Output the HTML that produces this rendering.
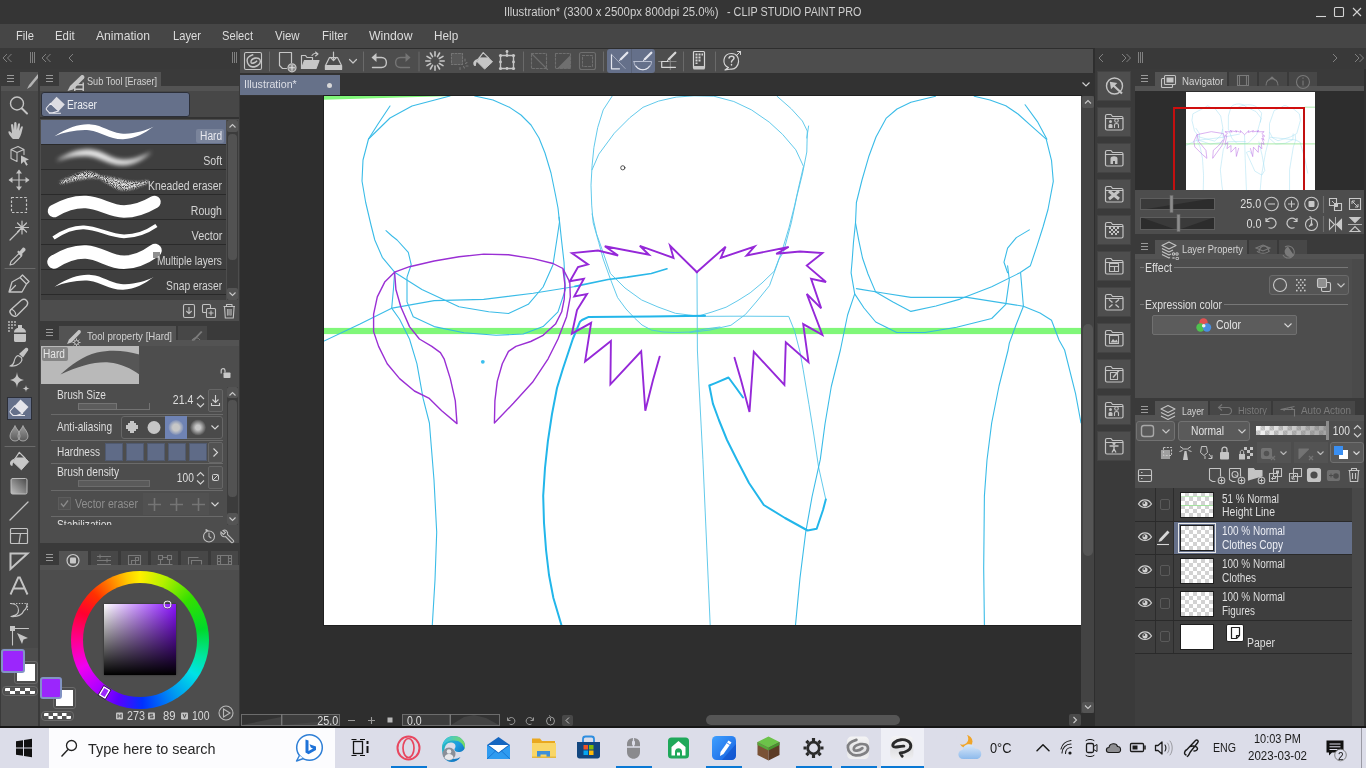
<!DOCTYPE html>
<html><head><meta charset="utf-8"><title>CSP</title>
<style>
*{box-sizing:border-box;margin:0;padding:0}
html,body{width:1366px;height:768px;overflow:hidden;background:#2e2e2e;font-family:"Liberation Sans",sans-serif;color:#d6d6d6}
.a{position:absolute}
.t{position:absolute;white-space:nowrap;line-height:1}
svg{position:absolute;overflow:visible}
.btn{position:absolute;background:#4e4e4e;border:1px solid #404040}
</style></head><body>
<!-- TITLE BAR -->
<div class="a" style="left:0;top:0;width:1366px;height:24px;background:#353535"></div>
<div class="t" style="left:503.50px;transform-origin:0 50%;top:6.34px;font-size:12.0px;color:#cfcfcf;transform:scaleX(0.9485)">Illustration* (3300 x 2500px 800dpi 25.0%)</div><div class="t" style="left:727.00px;transform-origin:0 50%;top:6.34px;font-size:12.0px;color:#cfcfcf;transform:scaleX(0.9005)">- CLIP STUDIO PAINT PRO</div>
<svg style="left:1300px;top:0" width="66" height="24" stroke="#d4d4d4" stroke-width="1.100" fill="none"><path d="M16 16.500h10"/><rect x="34.500" y="7.500" width="9" height="9" rx="1"/><path d="M53 8l8 8M61 8l-8 8"/></svg>
<!-- MENU BAR -->
<div class="a" style="left:0;top:24px;width:1366px;height:24px;background:#464646"></div>
<div class="t" style="left:15.50px;transform-origin:0 50%;top:28.59px;font-size:13.0px;color:#dcdcdc;transform:scaleX(0.8592)">File</div><div class="t" style="left:55.00px;transform-origin:0 50%;top:28.59px;font-size:13.0px;color:#dcdcdc;transform:scaleX(0.8749)">Edit</div><div class="t" style="left:96.30px;transform-origin:0 50%;top:28.59px;font-size:13.0px;color:#dcdcdc;transform:scaleX(0.9341)">Animation</div><div class="t" style="left:173.20px;transform-origin:0 50%;top:28.59px;font-size:13.0px;color:#dcdcdc;transform:scaleX(0.8610)">Layer</div><div class="t" style="left:222.00px;transform-origin:0 50%;top:28.59px;font-size:13.0px;color:#dcdcdc;transform:scaleX(0.8579)">Select</div><div class="t" style="left:275.00px;transform-origin:0 50%;top:28.59px;font-size:13.0px;color:#dcdcdc;transform:scaleX(0.8803)">View</div><div class="t" style="left:322.20px;transform-origin:0 50%;top:28.59px;font-size:13.0px;color:#dcdcdc;transform:scaleX(0.8861)">Filter</div><div class="t" style="left:369.00px;transform-origin:0 50%;top:28.59px;font-size:13.0px;color:#dcdcdc;transform:scaleX(0.9408)">Window</div><div class="t" style="left:434.30px;transform-origin:0 50%;top:28.59px;font-size:13.0px;color:#dcdcdc;transform:scaleX(0.9051)">Help</div>
<!-- DOCK HEADER STRIPS -->
<div class="a" style="left:0;top:48px;width:240px;height:21px;background:#393939"></div>
<div class="a" style="left:1095px;top:48px;width:271px;height:21px;background:#393939"></div>
<!-- COMMAND BAR -->
<div class="a" style="left:240px;top:49px;width:853px;height:24px;background:#4d4d4d"></div>
<!-- DOC TAB -->
<div class="a" style="left:240px;top:73px;width:855px;height:23px;background:#323232"></div>
<div class="a" style="left:240px;top:75px;width:100px;height:20px;background:#667189"></div>
<div class="t" style="left:244.30px;transform-origin:0 50%;top:79.16px;font-size:11.5px;color:#dcdee6;transform:scaleX(0.9263)">Illustration*</div>
<div class="a" style="left:327px;top:83px;width:5px;height:5px;border-radius:3px;background:#d8d8d8"></div>
<!-- CANVAS -->
<div class="a" id="canvas" style="left:324px;top:96px;width:757px;height:529px;background:#fff;overflow:hidden;box-shadow:0 0 0 1px #202020"><svg viewBox="324 96 757 529" width="757" height="529" style="left:0;top:0" fill="none" stroke-linecap="round" stroke-linejoin="round">
<!-- green height lines -->
<path d="M324 96h130L400 97.600L324 99.800z" fill="#80f779" stroke="none"/>
<rect x="324" y="327.900" width="757" height="6.200" fill="#80f779" stroke="none"/>
<!-- thin cyan: left figure -->
<g stroke="#30b8e6" stroke-width="1.100" opacity=".95">
<path d="M450 96L412 106L390 118L368.500 139L363 160L362 181L365.700 202.500L371 225L374.800 240L382.300 257.300L394.600 272.200L421.900 289.500L459 306.800L488.700 311.800L508.500 313.500L528.300 304.300L543.100 287L553 264.700L556.800 240L559.500 222L558 208L555.500 195L551 173L545 153L539 138L531 125L521 115L510 107.600L493 100L474.700 96"/>
<path d="M390 106L378 124L368.500 139"/>
<path d="M386 230.600L392 236L397.100 240L408.300 252.400L411.200 264.700L407 277.100L407 301.900L413.200 316.700L434.200 326.600L463.900 332.800L496.100 335.300L523.300 334L543.100 326.600L558 311.800L565.400 289.500L564 262L561.500 240L559.600 222L559 217"/>
<path d="M324 341L360 324.100L392.200 308.100L434.200 300.600L483.700 299.400L533.200 293.200L580 285.800"/>
<path d="M394.600 272.200L393.400 289.500L391.700 308.100L399.600 319.200L409.500 339L416.900 363.700L423.100 398.400L429.400 423L434 480L436.700 532.300L435 580L432.300 625"/>
</g>
<!-- thin cyan: middle figure head -->
<g stroke="#4cc2e8" stroke-width=".95" opacity=".92">
<path d="M612.100 96.200L603.200 109.900L597.700 127.600L593.900 147.500L592.100 165.300L591 185.200L591.700 205.100L593.200 222.800L598.800 242.700L603.200 259L610 278L617.600 297.600L626 309L634.500 318L642 325L651.300 330L663 332L675.400 332.500L690 332L705 329L720 327"/>
<path d="M592.100 169.700L598.800 154.200L614.300 133.200L629.800 117.700L643 107.300L658.500 101.100L676.200 97.100L694 95.800L713.900 96.200L733.800 101.500L751.500 109.900L769.200 122.100L782.500 134.300L795.800 149.800L803.500 166.400L799.100 185.200L794.700 205.100L789.100 227.200L782.500 249.400L774.300 271.100L762 283L750.200 292.800L738 300.500L726.100 307.200L712 312L699.600 315.700"/>
<path d="M592.100 214L596.600 233.900L604 255L610.400 273.500L625 288L641.700 300L658 307L675.400 313.300L694.700 315.700"/>
<path d="M777 96.200L791.300 108.800L802.400 121L807.300 131L806.800 152L802.400 174.100L796.900 196.200L791.300 222.800L783.600 251.600L779.100 259.100L769.500 285.600L757 301L745.400 314.500L730.900 325.300L710 330L690 332.500"/>
<path d="M808.600 126L806.800 138"/>
<path d="M697 272L697.200 316L697.400 350L699 385L701 423L702.900 459.400L706 530L710.200 625"/>
<path d="M690 316.400L740 316.200L788.700 316.400L794.700 331.300L800 352L803.200 369.800L809 404.700L814 436L818.500 466.700L825.800 499.500"/>
</g>
<!-- thin cyan: right figure -->
<g stroke="#30b8e6" stroke-width="1.100" opacity=".95">
<path d="M935.5 96.3L910.9 102.3L897 109L886.3 118.1L876 137L868.7 156.8L862 180L856.4 202.5L855.500 222.900L858.800 240.600L862.500 258L868 274L875.7 292.1L893 302L910.9 311.4L936 306L960.1 299.1L991.7 286.8L1019.9 272.8L1030.4 265.7L1037.4 244.7L1043 227L1048 209.5L1053.3 181.4L1051.5 160.3L1046.2 139.2L1030.4 125.1L1018 114L1005.8 105.8L990 100L974.2 96.3"/>
<path d="M1025.1 104.8L1037.4 121.6L1046.9 139.2"/>
<path d="M855.500 222.900L853.500 242L852.200 260L851.100 272.800L854.7 293.9L864 308L875.7 322L896.8 332.5L925 332.5L956.6 327.3L991.7 318.5L1005.8 304.4L1009.3 279.8L1007.6 265.7"/>
<path d="M1029.3 229.9L1016.3 237.6L1007.6 248.2L1004 262.2L1007.6 272.8"/>
<path d="M1020.6 272.8L1023.4 306.2L1016 325L1009.3 343.1L1008.1 350L999 386L991.7 422.9L987 460L984.4 495.9L983.7 568.8L984.4 625"/>
<path d="M856.4 288.6L883 293L910.9 297.4L967.1 297.4L1023.4 306.2L1040 313L1051.5 320.2L1059 340L1064.6 350L1075.6 393.8L1081 423"/>
<path d="M854.7 293.9L847.6 315L840.4 350L831.3 386.5L825 424L820.3 459.4L812 497L805.7 532.3L800 578L795.5 625"/>
</g>
<!-- medium cyan shoulder stroke -->
<path d="M575 286.400L608 279.500L627.200 277.100L651.300 273.500L667 268.700" stroke="#2bb8e8" stroke-width="1.600"/>
<!-- thick cyan: middle figure body + hand -->
<g stroke="#22b6ea" stroke-width="2">
<path d="M705 315.7L650 316.4L588.700 316.900L582 320L580 321.700L572.800 339L562.900 368.700L557 388L552 414L547.9 441.2L545 468L543.2 495.9L544 523L546.1 550.5L549 575L553.4 598L561.4 625"/>
<path d="M743 397.5L735.5 387L728.5 377.5L715.3 383.1L709.3 385.5L712.9 403.6L718.9 420L727 440L736.5 459L749 483L763.8 505L785 518L807.6 530.5L816.7 528.7L823 510L825.8 499.5"/>
</g>
<circle cx="482.800" cy="361.800" r="1.900" fill="#3bbfee" stroke="none"/>
<!-- purple: left scarf -->
<g stroke="#9a2fd4" stroke-width="1.4">
<path d="M394.600 272.200L409.500 266.700L434.200 261L459 256.800L483.700 254.100L508.500 254.800L533.200 258.600L553 263.500L562.900 268.500L569.800 282.100L570.300 296.900L566.600 316.700L558 339L548.100 358.800L532.500 382.300L513.400 403.300L494.400 423.100L494.900 400.900L497.300 381.100L502.300 363.700L508.500 351.400L515.900 346.400L530.700 341.500L543.100 335.300L555.500 324.100L561.700 311.800L564.200 299.400L564.900 284.500L562.900 268.500"/>
<path d="M394.600 272.200L384.700 282.100L377.300 296.900L373.600 314.200L373.600 331.600L378.600 346.400L387.200 363.700L399.600 378.600L414.400 391L429.300 398.400L441.700 410.800L457 423.600L455.300 400.900L450.300 378.600L444.100 358.800L440.400 352.600L431.800 346.400L419.400 339L409.500 326.600L400.800 306.800L395.900 289.500L394.600 272.200"/>
</g>
<!-- purple: fur collar -->
<g stroke="#9528d8" stroke-width="1.9" stroke-linejoin="miter">
<path d="M697 272.3L670.1 245.8L673.5 257.9L639.8 245.8L648.9 254.7L604.8 246.3L618.1 255.5L598 250.5L571.9 253.1L588 264.4L578 267L569.9 281.2L583.9 278.8L574.3 296.4L587 294L577 310L571.9 333.7L591.1 322.9L585.1 361.4L610.9 340.9L610.4 384.3L641.2 351.3L645.3 410.8L653 380L659.7 356.6"/>
<path d="M696.7 272.3L725.6 246.6L720.8 257.9L754.5 246.6L746.6 255.5L788.7 247L776.2 253.8L800 251.5L822.4 253.1L806.8 265.6L826 282L811.1 278.8L821.2 308.4L806.8 294L822.4 334.9L803.2 324.1L808.5 362.1L785.8 342.2L784.4 384.8L753.8 351.8L749.5 412L741 380L734.5 357.8"/>
</g>
<!-- cursor -->
<circle cx="622.800" cy="167.800" r="2.100" stroke="#2a2a2a" stroke-width=".8" fill="#fff"/>
</svg></div>

<!-- LEFT DOCK HEADER ICONS -->
<svg style="left:0;top:46px" width="240" height="21" stroke="#808080" stroke-width="1" fill="none"><path d="M7 8l-4 4 4 4M11.500 8l-4 4 4 4M30.500 6v11M32.500 6v11M34.500 6v11M46 8l-4 4 4 4M50.500 8l-4 4 4 4M73 8l-4 4 4 4M232.500 6v11M234.500 6v11M236.500 6v11"/></svg>
<!-- LEFT DOCK BG -->
<div class="a" style="left:0;top:69px;width:240px;height:659px;background:#3a3a3a"></div>
<!-- TOOL COLUMN -->
<div class="a" style="left:1px;top:70px;width:37px;height:657px;background:#484848"></div>
<div class="a" style="left:1px;top:70px;width:37px;height:16px;background:#3a3a3a"></div>
<div class="a" style="left:20px;top:72px;width:18px;height:19px;background:#535353"></div>
<div class="a" style="left:1px;top:86px;width:37px;height:5px;background:#535353"></div>
<svg style="left:0;top:70px" width="40" height="22" stroke="#9a9a9a" stroke-width="1" fill="none"><path d="M7 5.500h7M7 8.500h7M7 11.500h7"/><path d="M38 4l-9 11-2 4 4-2.500 7-8.500z" fill="#b4b4b4" stroke="none"/></svg>
<!-- tool icons -->
<svg id="tools" style="left:0;top:91px" width="39" height="560" stroke="#c4c4c4" stroke-width="1.4" fill="none" stroke-linecap="round" stroke-linejoin="round">
<!-- magnifier (19,104 => y 13) -->
<g transform="translate(0 1)"><circle cx="17" cy="11.500" r="6.500"/><path d="M22 16.500l5 5" stroke-width="2"/></g>
<!-- hand y=39 -->
<g transform="translate(0 2)"><path d="M13 46c-3-3-5-6-4.500-7.500 1-1 2.500.5 3.500 2l-1-8.500c.3-1.500 1.800-1.500 2.200 0l.8 5 .2-7c.3-1.500 2-1.500 2.300 0l.3 7 1.200-6c.5-1.300 2-1 2 .4l-.8 6.600 1.800-4c.7-1.200 2-.6 1.800.6-1 4-1.500 8-4 11.400z" fill="#c4c4c4" stroke="none"/></g>
<!-- 3d cube y=63 -->
<g transform="translate(0 1.500)"><g stroke-width="1.100"><path d="M11 57l7-3 6 3v5M11 57v9l6 3M11 57l6 3 7-3M17 60v9"/></g><path d="M21 63l8 4-3.500 1.200 2.300 4-1.600 1-2.300-4.200-2.900 2.500z" fill="#c4c4c4" stroke="none"/></g>
<!-- move y=89 -->
<g stroke-width="1.200"><path d="M19 80v18M10 89h18"/></g><path d="M19 78.500l3 4h-6zM19 99.500l3-4h-6zM8.500 89l4-3v6zM29.500 89l-4-3v6z" fill="#c4c4c4" stroke="none"/>
<!-- marquee y=114 -->
<rect x="11.500" y="106.500" width="15" height="15" stroke-dasharray="2.500 1.700" stroke-width="1.200" stroke-linecap="butt"/>
<!-- wand y=138 -->
<g stroke-width="1.200"><path d="M10 149l9-9"/><path d="M22 130v13M15.500 136.500h13M17.500 132l9 9M26.500 132l-9 9"/></g>
<!-- eyedropper y=165 -->
<path d="M10 174l1-3.500 8-8 2.500 2.500-8 8z" stroke-width="1.100"/><path d="M19.500 160.500l3-3.500c1.500-1.300 4 1 2.700 2.700l-3.200 3.200 .8 1-1.400 1.400-4.300-4.300 1.400-1.400z" fill="#c4c4c4" stroke="none"/>
<path d="M5 177.500h30" stroke="#6a6a6a" stroke-width="1"/>
<!-- pen y=192 -->
<path d="M9 201l3-10 8-4.500 6.500 6.500-4.500 8zM9 201l6.500-6.500M20 186.500l2.500-2.500 6.500 6.500-2.500 2.500" stroke-width="1.300"/>
<!-- pencil y=217 -->
<path d="M11 223c-1.500-1.500-1.500-3 0-4.500l10-9c2-1.500 4-1.500 5.500 0s1.500 3.500 0 5.500l-9.500 9.500c-1.500 1.500-4.500.5-6-1.500z" stroke-width="1.400"/><path d="M11 218.500c1.500-.5 5 2.500 4.500 5" stroke-width="1.100"/>
<!-- airbrush y=241 -->
<path d="M14 243h12v6.500c0 1-1 1.500-2 1.500h-8c-1 0-2-.5-2-1.500zM14 241.500c0-3 2.500-4.500 4-4.500v-3h4v3c1.500 0 4 1.500 4 4.500z" fill="#c4c4c4" stroke="none"/><g fill="#c4c4c4" stroke="none"><circle cx="9" cy="231" r=".9"/><circle cx="12" cy="231" r=".9"/><circle cx="15" cy="231" r=".9"/><circle cx="9" cy="234" r=".9"/><circle cx="12" cy="234" r=".9"/><circle cx="15" cy="234" r=".9"/><circle cx="9" cy="237" r=".9"/><circle cx="12" cy="237" r=".9"/><circle cx="9" cy="240" r=".9"/></g>
<!-- brush y=267 -->
<path d="M19 263l6.500-6c1.500-1 3.500.5 2.500 2.500l-5 7z" fill="#c4c4c4" stroke="none"/><path d="M18 264.500c-3 1-3.500 4-4 6.500-.5 2-2 3.500-4 4 4 .5 9-1 11-4 1-1.500 1-3.500.5-4.500z" stroke-width="1.200"/>
<!-- sparkle y=292 -->
<path d="M17 281c.6 5 2 7 7 8-5 1-6.400 3-7 8-.6-5-2-7-7-8 5-1 6.400-3 7-8zM26 294c.3 2.300 1 3.200 3.500 3.600-2.500.4-3.200 1.300-3.500 3.600-.3-2.300-1-3.200-3.500-3.600 2.500-.4 3.200-1.300 3.500-3.600z" fill="#c4c4c4" stroke="none"/>
</svg>
<!-- selected eraser tool -->
<div class="a" style="left:7px;top:397px;width:25px;height:23px;background:#65708a;border:1px solid #2c2f38"></div>
<svg style="left:6px;top:395px" width="27" height="26" fill="none" stroke="#e8e8ee" stroke-width="1.100" stroke-linejoin="round"><path d="M14.500 4.500l8 7.500-6 6.500-8-7.500z" fill="#e4e4ea" stroke="none"/><path d="M8.500 11l-4 4.500c-.7.800-.7 1.600 0 2.300l2.600 2.700h3.400l6-2zM7 20.500h12"/></svg>
<svg id="tools2" style="left:0;top:420px" width="39" height="240" stroke="#c4c4c4" stroke-width="1.400" fill="none" stroke-linecap="round" stroke-linejoin="round">
<!-- blend y=434 => 14 -->
<defs><linearGradient id="gbl" x1="0" y1="0" x2="0" y2="1"><stop offset="0" stop-color="#9a9a9a"/><stop offset="1" stop-color="#5a5a5a"/></linearGradient><linearGradient id="ggr" x1="0" y1="1" x2="1" y2="0"><stop offset="0" stop-color="#c0c0c0"/><stop offset="1" stop-color="#484848"/></linearGradient></defs>
<path d="M15 6c2 3.500 5 6.500 5 10 0 3-2.200 5-5 5s-5-2-5-5c0-3.500 3-6.500 5-10zM23 6c2 3.500 5 6.500 5 10 0 3-2.200 5-5 5s-5-2-5-5c0-3.500 3-6.500 5-10z" fill="url(#gbl)" stroke="#b8b8b8" stroke-width=".8"/>
<path d="M5 26.500h30" stroke="#6a6a6a" stroke-width="1"/>
<!-- fill y=461 => 41 -->
<path d="M15.500 38h9.400l3.700 3.700-7.200 8.100-8.400-8.100z" fill="#c8c8c8" stroke="#c8c8c8" stroke-width="1"/><path d="M15.500 38l3.800-5.700 5.600 5.700" stroke="#c8c8c8" stroke-width="1.200"/><path d="M14.500 38.800c-3 .7-4.800 2.700-4.500 5 .2 1.500 1.200 2.300 2.500 2 .3-1.800.3-3.500 1.500-5z" fill="#c8c8c8" stroke="none"/>
<!-- gradient y=486 => 66 -->
<rect x="11" y="58.500" width="16" height="15.500" rx="1.500" fill="url(#ggr)" stroke="#bdbdbd" stroke-width="1"/>
<!-- line y=511 => 91 -->
<path d="M10 100l18-18" stroke-width="1.300"/>
<!-- frame y=536 => 116 -->
<g stroke-width="1.200"><rect x="10.500" y="108.500" width="17" height="15" rx="1"/><path d="M10.500 113.500h17M20.500 113.500l-1.500 10"/></g>
<!-- ruler y=561 => 141 -->
<path d="M10.500 133.500h17l-17 15.500z" stroke-width="2" stroke-linejoin="miter"/>
<!-- text A y=586 => 166 -->
<path d="M10.500 174.500l7.700-17h1.600l7.700 17M13.500 168.500h11" stroke-width="1.900" stroke-linejoin="miter" stroke-linecap="butt"/>
<!-- balloon y=610 => 190 -->
<path d="M10.500 183.500c5 0 8 3 8 7 0 3-2 5-7.500 6 7 .5 11-1.500 13-6 1.500-1 3-2.500 3-7" stroke-width="1.200"/><path d="M10.500 183.500h17v7" stroke-width="1" stroke-dasharray="1.300 1.500" stroke-linecap="butt"/>
<!-- correct line y=635 => 215 -->
<rect x="10" y="206" width="5" height="5" fill="#c4c4c4" stroke="none"/><path d="M12.500 209v16M12.500 208.500h16" stroke-width="1.100"/><path d="M17 213l11 5-4.500 1.500-1.500 4.500z" fill="#c4c4c4" stroke="none"/>
</svg>
<!-- main color chips -->
<div class="a" style="left:1px;top:648px;width:37px;height:79px;background:#4d4d4d"></div>
<div class="a" style="left:14px;top:661px;width:24px;height:23px;border:1px solid #6a6a6a;border-radius:3px;background:#4d4d4d"></div>
<div class="a" style="left:17px;top:664px;width:18px;height:17px;background:#fff"></div>
<div class="a" style="left:1px;top:649px;width:24px;height:24px;background:#9b26fc;border:2px solid #8293c4;border-radius:3px"></div>
<div class="a" style="left:2px;top:686px;width:36px;height:10px;border:1px solid #6a6a6a;border-radius:4px"></div>
<svg style="left:5px;top:688px" width="30" height="6"><rect width="30" height="6" fill="#fff" rx="1"/><path d="M0 3h5v3h-5zM5 0h5v3h-5zM10 3h5v3h-5zM15 0h5v3h-5zM20 3h5v3h-5zM25 0h5v3h-5z" fill="#555"/></svg>

<!-- SUB TOOL PANEL -->
<div class="a" style="left:40px;top:70px;width:199px;height:251px;background:#4d4d4d"></div>
<div class="a" style="left:40px;top:70px;width:199px;height:16px;background:#3a3a3a"></div>
<div class="a" style="left:59px;top:72px;width:102px;height:19px;background:#535353"></div>
<div class="a" style="left:40px;top:86px;width:199px;height:5px;background:#535353"></div>
<svg style="left:40px;top:70px" width="200" height="22" stroke="#9a9a9a" stroke-width="1" fill="none"><path d="M6 5.500h7M6 8.500h7M6 11.500h7"/><g fill="#c4c4c4" stroke="none"><path d="M41 5.500l-11 10.500-2.500 5 5.500-1.500 11-11c1.500-2-1-4.500-3-3z"/><path d="M34 14h10v1.500h-10zM34 18.500h10v1.500h-10zM42.500 12.500h1.500v9h-1.500zM34 12.500h1.500v9h-1.500z"/></g></svg>
<div class="t" style="left:87.00px;transform-origin:0 50%;top:76.26px;font-size:11.5px;color:#d2d2d2;transform:scaleX(0.7954)">Sub Tool [Eraser]</div>
<!-- group button -->
<div class="a" style="left:40px;top:91px;width:199px;height:27px;background:#474747"></div>
<div class="a" style="left:41px;top:92px;width:149px;height:25px;background:#65708a;border:1px solid #2c2f38;border-radius:3px"></div>
<svg style="left:44.500px;top:94px" width="22" height="22" viewBox="0 0 20 20" fill="none" stroke="#e8e8ee" stroke-width="1" stroke-linejoin="round"><path d="M10.500 2.500l7.500 7-5.500 6-7.500-7z" fill="#dcdce2" stroke="none"/><path d="M5 8.500l-3.500 4c-.6.700-.6 1.400 0 2l2.300 2.500h3l5.700-1.500zM3.500 17.500h11"/></svg>
<div class="t" style="left:67.00px;transform-origin:0 50%;top:98.91px;font-size:12.5px;color:#eceef2;transform:scaleX(0.8149)">Eraser</div>
<div class="a" style="left:40px;top:117px;width:199px;height:2px;background:#333"></div>
<!-- list -->
<div class="a" style="left:41px;top:120px;width:185px;height:180px;background:#3f3f3f"></div>
<div class="a" style="left:41px;top:120px;width:185px;height:25px;background:#65708a"></div>
<div class="a" style="left:41px;top:144px;width:185px;height:1px;background:#2a2a2a"></div>
<div class="a" style="left:41px;top:169px;width:185px;height:1px;background:#2a2a2a"></div>
<div class="a" style="left:41px;top:194px;width:185px;height:1px;background:#2a2a2a"></div>
<div class="a" style="left:41px;top:219px;width:185px;height:1px;background:#2a2a2a"></div>
<div class="a" style="left:41px;top:244px;width:185px;height:1px;background:#2a2a2a"></div>
<div class="a" style="left:41px;top:269px;width:185px;height:1px;background:#2a2a2a"></div>
<div class="a" style="left:41px;top:294px;width:185px;height:1px;background:#2a2a2a"></div>
<div class="a" style="left:196px;top:129px;width:28px;height:14px;background:#7a849b;border-radius:2px"></div>
<svg style="left:41px;top:120px" width="185" height="177" fill="none">
<defs><filter id="blr" x="-20%" y="-100%" width="140%" height="300%"><feGaussianBlur stdDeviation="1.900"/></filter>
<filter id="grain" x="-5%" y="-20%" width="110%" height="140%"><feTurbulence type="fractalNoise" baseFrequency="1.1" numOctaves="1" seed="7" result="n"/><feColorMatrix in="n" values="0 0 0 0 1  0 0 0 0 1  0 0 0 0 1  2.5 2.5 0 0 -1.900" result="m"/><feGaussianBlur in="SourceGraphic" stdDeviation="1.200" result="b"/><feComposite in="b" in2="m" operator="in"/></filter></defs>
<path d="M13.500 16.2C28 7.0 40 3.5 50 4.5C62 5.5 68 12.0 80 13.5C92 14.5 104 11.0 112.700 6.6C104 13.0 94 19.0 82 19.3C68 19.5 60 11.5 48 10.2C36 9.5 24 12.0 13.500 16.2Z" fill="#fff"/>
<path d="M15 41C28 32 40 28.500 50 29.500C62 30.500 68 38 80 39.500C92 40.500 102 36 111 31.500C103 39 94 45 82 45.300C68 45.500 60 37.500 48 36.200C36 35.500 25 37.500 15 41Z" fill="#f2f2f2" filter="url(#blr)" opacity=".95"/>
<path d="M20 62.500C30 58 38 53.500 47 53C58 53 68 65.500 80 68.500C90 70 98 65 106 62C98 64 90 64 80 61C68 58 58 56 47 57C38 58 30 60 20 62.500Z" fill="#e6e6e6" stroke="#e6e6e6" stroke-width="3" stroke-linejoin="round" filter="url(#grain)"/>
<path d="M13 91C24 84.500 34 81.500 45 82C60 83 68 91 83 91.500C95 91.500 105 87 113.500 82" stroke="#fff" stroke-width="12.500" stroke-linecap="round"/>
<path d="M12.500 118C24 110 33 107 43 107.300C58 108 68 116 83 116.300C95 116.300 106 112 115.400 105.500" stroke="#fff" stroke-width="3.800" stroke-linecap="butt"/>
<path d="M13 142C24 135 34 131.500 45 132C60 133 68 142 83 142.300C95 142.300 105 137 114 130.500" stroke="#fff" stroke-width="13.500" stroke-linecap="round"/>
<path d="M13.500 166.7C28 157.5 40 154.0 50 155.0C62 156.0 68 162.5 80 164.0C92 165.0 104 161.5 112.700 157.1C104 163.5 94 169.5 82 169.8C68 170.0 60 162.0 48 160.7C36 160.0 24 162.5 13.500 166.7Z" fill="#fff"/>
</svg>
<div class="a" style="left:153px;top:252px;width:7px;height:6px;background:#8e8e8e"></div>
<div class="t" style="right:1144.00px;transform-origin:100% 50%;top:130.21px;font-size:12.5px;color:#e8e8ee;transform:scaleX(0.8121)">Hard</div>
<div class="t" style="right:1144.00px;transform-origin:100% 50%;top:155.21px;font-size:12.5px;color:#d4d4d4;transform:scaleX(0.8545)">Soft</div>
<div class="t" style="right:1144.00px;transform-origin:100% 50%;top:180.21px;font-size:12.5px;color:#d4d4d4;transform:scaleX(0.8320)">Kneaded eraser</div>
<div class="t" style="right:1144.00px;transform-origin:100% 50%;top:205.21px;font-size:12.5px;color:#d4d4d4;transform:scaleX(0.8417)">Rough</div>
<div class="t" style="right:1144.00px;transform-origin:100% 50%;top:230.21px;font-size:12.5px;color:#d4d4d4;transform:scaleX(0.8748)">Vector</div>
<div class="t" style="right:1144.00px;transform-origin:100% 50%;top:255.21px;font-size:12.5px;color:#d4d4d4;transform:scaleX(0.8137)">Multiple layers</div>
<div class="t" style="right:1144.00px;transform-origin:100% 50%;top:280.21px;font-size:12.5px;color:#d4d4d4;transform:scaleX(0.8224)">Snap eraser</div>

<!-- sub tool scrollbar -->
<div class="a" style="left:227px;top:120px;width:11px;height:180px;background:#3c3c3c"></div>
<div class="a" style="left:227px;top:120px;width:11px;height:12px;background:#545454;border-radius:2px"></div>
<div class="a" style="left:227px;top:288px;width:11px;height:12px;background:#545454;border-radius:2px"></div>
<div class="a" style="left:228px;top:134px;width:9px;height:126px;background:#525252;border-radius:4px"></div>
<svg style="left:227px;top:120px" width="11" height="180" stroke="#c8c8c8" stroke-width="1.100" fill="none"><path d="M2.500 7.500l3-3 3 3M2.500 172.500l3 3 3-3"/></svg>
<!-- sub tool footer -->
<div class="a" style="left:40px;top:301px;width:199px;height:20px;background:#4d4d4d"></div>
<svg style="left:180px;top:303px" width="60" height="18" stroke="#c2c2c2" stroke-width="1.100" fill="none" stroke-linejoin="round"><rect x="3.500" y="1.500" width="11" height="13" rx="1.500"/><path d="M9 4v6.500M6.300 8l2.700 2.700 2.700-2.700"/><rect x="22.500" y="1.500" width="8" height="8" rx="1"/><rect x="26.500" y="5.500" width="9" height="9" rx="1" fill="#4d4d4d"/><path d="M31 7.500v5M28.500 10h5"/><path d="M43.500 3.500h11.500M46.500 3.500v-2h5.500v2M44.500 3.500l.8 11.500h8l.8-11.500M47.500 6v6.500M51 6v6.500"/><rect x="47.500" y="6" width="3.500" height="6.500" fill="#8a8a8a" stroke="none"/></svg>

<!-- TOOL PROPERTY PANEL -->
<div class="a" style="left:40px;top:325px;width:199px;height:218px;background:#4d4d4d"></div>
<div class="a" style="left:40px;top:321px;width:199px;height:19px;background:#3a3a3a"></div>
<div class="a" style="left:59px;top:326px;width:117px;height:20px;background:#535353"></div>
<div class="a" style="left:178px;top:326px;width:29px;height:14px;background:#474747"></div>
<div class="a" style="left:40px;top:340px;width:199px;height:6px;background:#535353"></div>
<svg style="left:40px;top:324px" width="200" height="22" stroke="#9a9a9a" stroke-width="1" fill="none"><path d="M6 5.500h7M6 8.500h7M6 11.500h7"/><g fill="#c4c4c4" stroke="none"><path d="M38 6.500l-9 9-2 4.500 4.500-1.500 9-9.500c1.300-1.800-.8-4-2.500-2.500z"/></g><g stroke="#c4c4c4" stroke-width="1"><circle cx="36.500" cy="18.500" r="2"/><path d="M36.500 14.500v1.500M36.500 21v1.500M32.500 18.500h1.500M39 18.500h1.500M33.700 15.700l1 1M38.300 20.300l1 1M39.300 15.700l-1 1M34.700 20.300l-1 1"/></g><g fill="#7c7c7c" stroke="none"><path d="M161 7l-8 8.500-1.500 1.500 3-.5 8-8.500z"/></g><path d="M152 16c2-3 6-3 8 0" stroke="#7c7c7c"/></svg>
<div class="t" style="left:87.00px;transform-origin:0 50%;top:330.76px;font-size:11.5px;color:#d2d2d2;transform:scaleX(0.8416)">Tool property [Hard]</div>
<!-- preview -->
<div class="a" style="left:41px;top:346px;width:98px;height:38px;background:#b9b9b9"></div>
<svg style="left:41px;top:346px" width="98" height="38"><path d="M19.400 28.500C30 19 42 10 56 6.500C70 3.500 85 4.500 98.300 8.600L98.300 28.500C90 22.500 80 17.500 68 16.500C54 15.500 38 20 19.400 28.500Z" fill="#565656"/></svg>
<div class="a" style="left:42px;top:347px;width:26px;height:14px;background:#858585;border-radius:2px"></div>
<div class="t" style="left:43.00px;transform-origin:0 50%;top:348.34px;font-size:12.0px;color:#e6e6e6;transform:scaleX(0.8458)">Hard</div>
<svg style="left:218px;top:366px" width="14" height="14" fill="none" stroke="#c8c8c8" stroke-width="1.200"><rect x="5.500" y="6.500" width="7" height="5.500" fill="#c8c8c8" stroke="none" rx=".8"/><path d="M3.200 7.500v-3c0-2.500 3.800-2.500 3.800 0v2"/></svg>
<!-- rows -->
<div class="t" style="left:57.00px;transform-origin:0 50%;top:388.91px;font-size:12.5px;color:#dedede;transform:scaleX(0.8107)">Brush Size</div>
<div class="a" style="left:78px;top:403px;width:72px;height:7px;border-bottom:1px solid #727272;border-right:1px solid #727272"></div>
<div class="a" style="left:78px;top:403px;width:39px;height:7px;background:#5c5c5c;border:1px solid #747474"></div>
<div class="t" style="right:1172.50px;transform-origin:100% 50%;top:394.41px;font-size:12.5px;color:#dedede;transform:scaleX(0.8427)">21.4</div>
<svg style="left:195px;top:393px" width="12" height="16" stroke="#d0d0d0" stroke-width="1.100" fill="none"><path d="M2 6l3.500-3.500 3.500 3.500M2 10.500l3.500 3.500 3.500-3.500"/></svg>
<div class="a" style="left:208px;top:389px;width:15px;height:23px;background:#525252;border:1px solid #666;border-radius:2px"></div>
<svg style="left:208px;top:389px" width="15" height="23" stroke="#cfcfcf" stroke-width="1.100" fill="none"><path d="M7.500 6v7M4.500 10.500l3 3 3-3M3.500 14v2.500h8v-2.500"/></svg>
<div class="a" style="left:51px;top:414px;width:172px;height:1px;background:#6a6a6a"></div>
<div class="t" style="left:57.00px;transform-origin:0 50%;top:420.91px;font-size:12.5px;color:#dedede;transform:scaleX(0.8078)">Anti-aliasing</div>
<div class="a" style="left:121px;top:416px;width:102px;height:23px;background:#4a4a4a;border:1px solid #676767;border-radius:3px"></div>
<div class="a" style="left:165px;top:416px;width:22px;height:23px;background:#6f83b4"></div>
<svg style="left:121px;top:416px" width="102" height="23" fill="none"><defs><radialGradient id="aa3"><stop offset=".45" stop-color="#c6c6c6"/><stop offset="1" stop-color="#c6c6c6" stop-opacity=".15"/></radialGradient><radialGradient id="aa4"><stop offset=".3" stop-color="#c6c6c6"/><stop offset="1" stop-color="#c6c6c6" stop-opacity=".05"/></radialGradient></defs>
<path d="M9 5h4v2h2v2h2v4h-2v2h-2v2h-4v-2h-2v-2h-2v-4h2v-2h2z" fill="#c6c6c6"/><circle cx="33" cy="11.500" r="6.500" fill="#c6c6c6"/><circle cx="55" cy="11.500" r="7.500" fill="url(#aa3)"/><circle cx="77" cy="11.500" r="8" fill="url(#aa4)"/><path d="M90.500 9.500l3.500 3.500 3.500-3.500" stroke="#d8d8d8" stroke-width="1.100"/></svg>
<div class="a" style="left:51px;top:440px;width:172px;height:1px;background:#6a6a6a"></div>
<div class="t" style="left:57.00px;transform-origin:0 50%;top:446.41px;font-size:12.5px;color:#dedede;transform:scaleX(0.8038)">Hardness</div>
<div class="a" style="left:105px;top:443px;width:18px;height:18px;background:#5f6b87;border:1px solid #505a70"></div>
<div class="a" style="left:126px;top:443px;width:18px;height:18px;background:#5f6b87;border:1px solid #505a70"></div>
<div class="a" style="left:147px;top:443px;width:18px;height:18px;background:#5f6b87;border:1px solid #505a70"></div>
<div class="a" style="left:168px;top:443px;width:18px;height:18px;background:#5f6b87;border:1px solid #505a70"></div>
<div class="a" style="left:189px;top:443px;width:18px;height:18px;background:#5f6b87;border:1px solid #505a70"></div>
<div class="a" style="left:208px;top:442px;width:15px;height:21px;background:#525252;border:1px solid #666;border-radius:2px"></div>
<svg style="left:208px;top:442px" width="15" height="21" stroke="#d8d8d8" stroke-width="1.100" fill="none"><path d="M5.500 6.500l4 4-4 4"/></svg>
<div class="a" style="left:51px;top:463px;width:172px;height:1px;background:#6a6a6a"></div>
<div class="t" style="left:57.00px;transform-origin:0 50%;top:465.91px;font-size:12.5px;color:#dedede;transform:scaleX(0.8187)">Brush density</div>
<div class="a" style="left:78px;top:480px;width:72px;height:7px;background:#5a5a5a;border:1px solid #6c6c6c"></div>
<div class="t" style="right:1172.50px;transform-origin:100% 50%;top:471.91px;font-size:12.5px;color:#dedede;transform:scaleX(0.8152)">100</div>
<svg style="left:195px;top:470px" width="12" height="16" stroke="#d0d0d0" stroke-width="1.100" fill="none"><path d="M2 6l3.500-3.500 3.500 3.500M2 10.500l3.500 3.500 3.500-3.500"/></svg>
<div class="a" style="left:208px;top:466px;width:15px;height:23px;background:#525252;border:1px solid #666;border-radius:2px"></div>
<svg style="left:208px;top:466px" width="15" height="23" stroke="#cfcfcf" stroke-width="1" fill="none"><rect x="4.500" y="8.500" width="6" height="6" rx="1"/><path d="M5 14l5-5"/></svg>
<div class="a" style="left:51px;top:490px;width:172px;height:1px;background:#6a6a6a"></div>
<div class="a" style="left:58px;top:497px;width:13px;height:13px;background:#525252;border:1px solid #5c5c5c"></div>
<svg style="left:58px;top:497px" width="13" height="13" stroke="#8a8a8a" stroke-width="1.300" fill="none"><path d="M3 6.500l2.500 3 4.500-6"/></svg>
<div class="t" style="left:75.00px;transform-origin:0 50%;top:497.91px;font-size:12.5px;color:#8e8e8e;transform:scaleX(0.8475)">Vector eraser</div>
<div class="a" style="left:143px;top:493px;width:66px;height:22px;background:#515151"></div>
<svg style="left:143px;top:493px" width="80" height="22" stroke="#757575" stroke-width="1.600" fill="none"><path d="M11.500 5v13M5 11.500h13M33.500 5v13M27 11.500h13M55.500 5v13M49 11.500h13"/><path d="M68.500 9.500l3.500 3.500 3.500-3.500" stroke="#d8d8d8" stroke-width="1.100"/></svg>
<div class="a" style="left:51px;top:516px;width:172px;height:1px;background:#6a6a6a"></div>
<div class="a" style="left:41px;top:518px;width:186px;height:7px;overflow:hidden"><div class="t" style="left:16.00px;transform-origin:0 50%;top:0.91px;font-size:12.5px;color:#dedede;transform:scaleX(0.8160)">Stabilization</div></div>
<!-- scrollbar -->
<div class="a" style="left:227px;top:387px;width:11px;height:138px;background:#3c3c3c"></div>
<div class="a" style="left:227px;top:387px;width:11px;height:11px;background:#545454;border-radius:2px"></div>
<div class="a" style="left:227px;top:513px;width:11px;height:12px;background:#545454;border-radius:2px"></div>
<div class="a" style="left:228px;top:400px;width:9px;height:97px;background:#525252;border-radius:4px"></div>
<svg style="left:227px;top:388px" width="11" height="137" stroke="#c8c8c8" stroke-width="1.100" fill="none"><path d="M2.500 7.500l3-3 3 3M2.500 129.500l3 3 3-3"/></svg>
<!-- footer -->
<div class="a" style="left:40px;top:526px;width:199px;height:17px;background:#4d4d4d"></div>
<svg style="left:200px;top:528px" width="40" height="17" stroke="#bdbdbd" stroke-width="1.100" fill="none" stroke-linecap="round"><circle cx="9" cy="8.500" r="5.500"/><path d="M9 5v3.500l2 1.500M6 1.500l2 1.200M6 1.500l.3 2.300"/><path d="M23 2.500c2.500-1.500 5.500 1 4.500 4l6 6c.8 1-1 2.800-2 2l-6-6c-3 1-5.500-2-4.500-4.500l2.500 2.500 2-2z"/></svg>

<!-- COLOR PANEL -->
<div class="a" style="left:40px;top:549px;width:199px;height:178px;background:#4d4d4d"></div>
<div class="a" style="left:40px;top:549px;width:199px;height:16px;background:#3a3a3a"></div>
<div class="a" style="left:59px;top:551px;width:29px;height:19px;background:#535353"></div>
<div class="a" style="left:91px;top:551px;width:27px;height:14px;background:#474747"></div>
<div class="a" style="left:121px;top:551px;width:27px;height:14px;background:#474747"></div>
<div class="a" style="left:151px;top:551px;width:27px;height:14px;background:#474747"></div>
<div class="a" style="left:181px;top:551px;width:27px;height:14px;background:#474747"></div>
<div class="a" style="left:211px;top:551px;width:27px;height:14px;background:#474747"></div>
<div class="a" style="left:40px;top:565px;width:199px;height:5px;background:#535353"></div>
<svg style="left:40px;top:549px" width="200" height="22" stroke="#9a9a9a" stroke-width="1" fill="none"><path d="M6 5.500h7M6 8.500h7M6 11.500h7"/><circle cx="33" cy="11.500" r="6" stroke="#c8c8c8" stroke-width="1.200"/><rect x="30" y="8.500" width="6" height="6" rx="1" fill="#c8c8c8" stroke="none"/>
<g stroke="#7a7a7a" stroke-width="1.100"><path d="M57 7.500h14M57 11.500h14M57 15.500h14M60 5.500v4M67 9.500v4"/><path d="M88.500 6.500h12v9h-12zM91.500 11.500h4v4h-4zM95.500 8.500h3v3h-3z"/><path d="M118.500 6.500h4v4h-4zM127.500 6.500h4v4h-4zM120.500 10.500v5M129.500 10.500v5M117.500 15.500h15M122.500 8.500h5"/><path d="M148.500 15.500v-7h10M151.500 15.500v-4h10v4"/><path d="M177.500 6.500h14v9h-14zM180.500 6.500v9M188.500 6.500v9M177.500 9.500h3M177.500 12.500h3M188.500 9.500h3M188.500 12.500h3"/></g></svg>
<!-- wheel -->
<div class="a" style="left:70.500px;top:571px;width:138px;height:138px;border-radius:50%;background:conic-gradient(from 0deg,#ffef00 0deg,#b4f000 22deg,#35e000 50deg,#00d92a 80deg,#00e6a0 105deg,#00e2e6 122deg,#00a0f0 145deg,#0030ff 178deg,#5a00ff 200deg,#b000ff 222deg,#f000f0 245deg,#ff0090 270deg,#ff0030 295deg,#ff3000 315deg,#ff8c00 335deg,#ffc800 348deg,#ffef00 360deg)"></div>
<div class="a" style="left:82.500px;top:583px;width:114px;height:114px;border-radius:50%;background:#4d4d4d"></div>
<div class="a" style="left:104px;top:604px;width:72px;height:71px;background:linear-gradient(to bottom,rgba(0,0,0,0),#000),linear-gradient(to right,#fff,#8a12ff);box-shadow:0 0 2px rgba(0,0,0,.5)"></div>
<svg style="left:40px;top:570px" width="200" height="158" fill="none"><circle cx="127.500" cy="34.500" r="3.500" stroke="#fff" stroke-width="1.200"/><circle cx="127.500" cy="34.500" r="4.300" stroke="#333" stroke-width=".5"/><rect x="-3.200" y="-4.500" width="6.400" height="9" transform="translate(64.500 122.500) rotate(31)" stroke="#fff" stroke-width="1.500" fill="#9b26fc"/><rect x="-4.300" y="-5.600" width="8.600" height="11.200" transform="translate(64.500 122.500) rotate(31)" stroke="#222" stroke-width=".7"/>
<circle cx="186" cy="143" r="7" stroke="#b8b8b8" stroke-width="1.100"/><path d="M183.500 139l6.500 4-6.500 4z" stroke="#b8b8b8" stroke-width="1.100"/></svg>
<!-- sub chips -->
<div class="a" style="left:53px;top:687px;width:23px;height:22px;border:1px solid #6a6a6a;border-radius:3px;background:#4d4d4d"></div>
<div class="a" style="left:56px;top:690px;width:17px;height:16px;background:#fff"></div>
<div class="a" style="left:40px;top:677px;width:22px;height:22px;background:#9b26fc;border:2px solid #8293c4;border-radius:3px"></div>
<div class="a" style="left:41px;top:711px;width:33px;height:10px;border:1px solid #6a6a6a;border-radius:4px"></div>
<svg style="left:44px;top:713px" width="27" height="6"><rect width="27" height="6" fill="#fff" rx="1"/><path d="M0 3h4.500v3h-4.500zM4.500 0h4.500v3h-4.500zM9 3h4.500v3h-4.500zM13.500 0h4.500v3h-4.500zM18 3h4.500v3h-4.500zM22.500 0h4.500v3h-4.500z" fill="#555"/></svg>
<!-- HSV -->
<svg style="left:116px;top:711px" width="75" height="10" fill="none"><g fill="#c4c4c4"><rect x="0" y="1.500" width="7" height="7" rx="1"/><rect x="32" y="1.500" width="7" height="7" rx="1"/><rect x="65" y="1.500" width="7" height="7" rx="1"/></g><g stroke="#4d4d4d" stroke-width="1"><path d="M2 3v4M5 3v4M2 5h3"/><path d="M37 3.300h-3v1.700h3v1.700h-3"/><path d="M67 3l1.500 3.800 1.500-3.800"/></g></svg>
<div class="t" style="left:127.00px;transform-origin:0 50%;top:710.41px;font-size:12.5px;color:#d8d8d8;transform:scaleX(0.8632)">273</div>
<div class="t" style="left:163.00px;transform-origin:0 50%;top:710.41px;font-size:12.5px;color:#d8d8d8;transform:scaleX(0.8991)">89</div>
<div class="t" style="left:192.00px;transform-origin:0 50%;top:710.41px;font-size:12.5px;color:#d8d8d8;transform:scaleX(0.8392)">100</div>

<!-- RIGHT DOCK HEADER ICONS -->
<svg style="left:1095px;top:46px" width="271" height="21" stroke="#808080" stroke-width="1" fill="none"><path d="M8 8l-4 4 4 4M27 8l4 4-4 4M31.500 8l4 4-4 4M43.500 6v11M45.500 6v11M47.500 6v11M238 8l4 4-4 4M260 8l4 4-4 4M264.500 8l4 4-4 4"/></svg>
<!-- RIGHT DOCK BG -->
<div class="a" style="left:1095px;top:69px;width:271px;height:659px;background:#3a3a3a"></div>
<div class="a" style="left:1097px;top:71px;width:34px;height:30px;background:#4e4e4e;border:1px solid #434343"></div><svg style="left:1097px;top:71px" width="34" height="30" stroke="#c4c4c4" stroke-width="1.100" fill="none" stroke-linejoin="round"><circle cx="17.500" cy="15" r="8" stroke-width="1.400"/><path d="M16.500 14.500l8.500 8" stroke-width="2.200"/><path d="M12.800 10.800l7.500 1.200-6.300 6.300z" fill="#c4c4c4" stroke="none"/></svg>
<div class="a" style="left:1097px;top:107px;width:34px;height:30px;background:#4e4e4e;border:1px solid #434343"></div><svg style="left:1097px;top:107px" width="34" height="30" stroke="#c4c4c4" stroke-width="1.100" fill="none" stroke-linejoin="round"><path d="M8.500 21.500v-12.500c0-.8.700-1.500 1.500-1.500h4l1.500 2h9c.800 0 1.500.700 1.500 1.500v10.500c0 .800-.700 1.500-1.500 1.500h-14.500c-.800 0-1.500-.700-1.500-1.500z" stroke-width="1.200"/><path d="M8.500 11.500h17.500" stroke-width="1"/><circle cx="13.500" cy="14.500" r="1.500" fill="#c4c4c4" stroke="none"/><path d="M11.500 21v-2.500c0-2 4-2 4 0v2.500z" fill="#c4c4c4" stroke="none"/><circle cx="19.500" cy="13.500" r="1.800"/><path d="M17.500 21v-3c0-2 4-2 4 0v3"/></svg>
<div class="a" style="left:1097px;top:143px;width:34px;height:30px;background:#4e4e4e;border:1px solid #434343"></div><svg style="left:1097px;top:143px" width="34" height="30" stroke="#c4c4c4" stroke-width="1.100" fill="none" stroke-linejoin="round"><path d="M8.500 21.500v-12.500c0-.8.700-1.500 1.500-1.500h4l1.500 2h9c.800 0 1.500.700 1.500 1.500v10.500c0 .800-.700 1.500-1.500 1.500h-14.500c-.800 0-1.500-.700-1.500-1.500z" stroke-width="1.200"/><path d="M8.500 11.500h17.500" stroke-width="1"/><path d="M13.500 21v-5.500c0-3 7-3 7 0v5.500zM16 21v-3h2v3" fill="#c4c4c4" stroke="none"/><path d="M16 21v-3h2v3" fill="#4e4e4e" stroke="none"/></svg>
<div class="a" style="left:1097px;top:179px;width:34px;height:30px;background:#4e4e4e;border:1px solid #434343"></div><svg style="left:1097px;top:179px" width="34" height="30" stroke="#c4c4c4" stroke-width="1.100" fill="none" stroke-linejoin="round"><path d="M8.500 21.500v-12.500c0-.8.700-1.500 1.500-1.500h4l1.500 2h9c.800 0 1.500.700 1.500 1.500v10.500c0 .800-.700 1.500-1.500 1.500h-14.500c-.800 0-1.500-.700-1.500-1.500z" stroke-width="1.200"/><path d="M8.500 11.500h17.500" stroke-width="1"/><path d="M12 12l10 8M22 12l-10 8" stroke-width="3"/></svg>
<div class="a" style="left:1097px;top:215px;width:34px;height:30px;background:#4e4e4e;border:1px solid #434343"></div><svg style="left:1097px;top:215px" width="34" height="30" stroke="#c4c4c4" stroke-width="1.100" fill="none" stroke-linejoin="round"><path d="M8.500 21.500v-12.500c0-.8.700-1.500 1.500-1.500h4l1.500 2h9c.800 0 1.500.700 1.500 1.500v10.500c0 .800-.700 1.500-1.500 1.500h-14.500c-.800 0-1.500-.700-1.500-1.500z" stroke-width="1.200"/><path d="M8.500 11.500h17.500" stroke-width="1"/><g fill="#c4c4c4" stroke="none"><rect x="12" y="12" width="2" height="2"/><rect x="16" y="12" width="2" height="2"/><rect x="20" y="12" width="2" height="2"/><rect x="14" y="14" width="2" height="2"/><rect x="18" y="14" width="2" height="2"/><rect x="12" y="16" width="2" height="2"/><rect x="16" y="16" width="2" height="2"/><rect x="20" y="16" width="2" height="2"/><rect x="14" y="18" width="2" height="2"/><rect x="18" y="18" width="2" height="2"/></g></svg>
<div class="a" style="left:1097px;top:251px;width:34px;height:30px;background:#4e4e4e;border:1px solid #434343"></div><svg style="left:1097px;top:251px" width="34" height="30" stroke="#c4c4c4" stroke-width="1.100" fill="none" stroke-linejoin="round"><path d="M8.500 21.500v-12.500c0-.8.700-1.500 1.500-1.500h4l1.500 2h9c.800 0 1.500.700 1.500 1.500v10.500c0 .800-.700 1.500-1.500 1.500h-14.500c-.800 0-1.500-.700-1.500-1.500z" stroke-width="1.200"/><path d="M8.500 11.500h17.500" stroke-width="1"/><path d="M12.500 12.500h9v8h-9zM12.500 15.500h9M17.500 15.500v5"/></svg>
<div class="a" style="left:1097px;top:287px;width:34px;height:30px;background:#4e4e4e;border:1px solid #434343"></div><svg style="left:1097px;top:287px" width="34" height="30" stroke="#c4c4c4" stroke-width="1.100" fill="none" stroke-linejoin="round"><path d="M8.500 21.500v-12.500c0-.8.700-1.500 1.500-1.500h4l1.500 2h9c.800 0 1.500.700 1.500 1.500v10.500c0 .800-.700 1.500-1.500 1.500h-14.500c-.800 0-1.500-.700-1.500-1.500z" stroke-width="1.200"/><path d="M8.500 11.500h17.500" stroke-width="1"/><path d="M12 12.500l3.500 3M22 12.500l-3.500 3M12 20.500l3.500-3M22 20.500l-3.500-3" stroke-width="1.300"/></svg>
<div class="a" style="left:1097px;top:323px;width:34px;height:30px;background:#4e4e4e;border:1px solid #434343"></div><svg style="left:1097px;top:323px" width="34" height="30" stroke="#c4c4c4" stroke-width="1.100" fill="none" stroke-linejoin="round"><path d="M8.500 21.500v-12.500c0-.8.700-1.500 1.500-1.500h4l1.500 2h9c.800 0 1.500.700 1.500 1.500v10.500c0 .800-.700 1.500-1.500 1.500h-14.500c-.800 0-1.500-.700-1.500-1.500z" stroke-width="1.200"/><path d="M8.500 11.500h17.500" stroke-width="1"/><path d="M12.500 12.500h9v8h-9z"/><path d="M13.500 19.500l2.500-3.500 2 2 1.500-1.500 1.500 3z" fill="#c4c4c4" stroke="none"/></svg>
<div class="a" style="left:1097px;top:359px;width:34px;height:30px;background:#4e4e4e;border:1px solid #434343"></div><svg style="left:1097px;top:359px" width="34" height="30" stroke="#c4c4c4" stroke-width="1.100" fill="none" stroke-linejoin="round"><path d="M8.500 21.500v-12.500c0-.8.700-1.500 1.500-1.500h4l1.500 2h9c.800 0 1.500.700 1.500 1.500v10.500c0 .800-.700 1.500-1.500 1.500h-14.500c-.800 0-1.500-.700-1.500-1.500z" stroke-width="1.200"/><path d="M8.500 11.500h17.500" stroke-width="1"/><path d="M13.500 13.500h7v7h-7z"/><path d="M16 18.500l6-7" stroke-width="1.500"/></svg>
<div class="a" style="left:1097px;top:395px;width:34px;height:30px;background:#4e4e4e;border:1px solid #434343"></div><svg style="left:1097px;top:395px" width="34" height="30" stroke="#c4c4c4" stroke-width="1.100" fill="none" stroke-linejoin="round"><path d="M8.500 21.500v-12.500c0-.8.700-1.500 1.500-1.500h4l1.500 2h9c.800 0 1.500.700 1.500 1.500v10.500c0 .800-.700 1.500-1.500 1.500h-14.500c-.800 0-1.500-.700-1.500-1.500z" stroke-width="1.200"/><path d="M8.500 11.500h17.500" stroke-width="1"/><circle cx="13.500" cy="14.500" r="1.500" fill="#c4c4c4" stroke="none"/><path d="M11.500 21v-2.500c0-2 4-2 4 0v2.500z" fill="#c4c4c4" stroke="none"/><circle cx="19.500" cy="13.500" r="1.800"/><path d="M17.500 21v-3c0-2 4-2 4 0v3"/></svg>
<div class="a" style="left:1097px;top:431px;width:34px;height:30px;background:#4e4e4e;border:1px solid #434343"></div><svg style="left:1097px;top:431px" width="34" height="30" stroke="#c4c4c4" stroke-width="1.100" fill="none" stroke-linejoin="round"><path d="M8.500 21.500v-12.500c0-.8.700-1.500 1.500-1.500h4l1.500 2h9c.800 0 1.500.700 1.500 1.500v10.500c0 .800-.700 1.500-1.500 1.500h-14.500c-.800 0-1.500-.700-1.500-1.500z" stroke-width="1.200"/><path d="M8.500 11.500h17.500" stroke-width="1"/><circle cx="17" cy="12.500" r="1.500" fill="#c4c4c4" stroke="none"/><path d="M12.500 15h9M17 15v3M17 18l-2 3.500M17 18l2 3.500" stroke-width="1.400"/></svg>

<!-- NAVIGATOR -->
<div class="a" style="left:1135px;top:70px;width:231px;height:164px;background:#4d4d4d"></div>
<div class="a" style="left:1135px;top:70px;width:231px;height:16px;background:#3a3a3a"></div>
<div class="a" style="left:1155px;top:72px;width:72px;height:19px;background:#535353"></div>
<div class="a" style="left:1229px;top:72px;width:28px;height:14px;background:#474747"></div>
<div class="a" style="left:1259px;top:72px;width:28px;height:14px;background:#474747"></div>
<div class="a" style="left:1289px;top:72px;width:28px;height:14px;background:#474747"></div>
<div class="a" style="left:1135px;top:86px;width:231px;height:5px;background:#535353"></div>
<svg style="left:1135px;top:70px" width="231" height="22" stroke="#9a9a9a" stroke-width="1" fill="none"><path d="M6 5.500h7M6 8.500h7M6 11.500h7"/><g stroke="#c4c4c4" stroke-width="1.100"><rect x="26.500" y="8.500" width="11" height="9" rx="1"/><rect x="29.500" y="5.500" width="11" height="9" rx="1" fill="#535353"/><rect x="31.500" y="7.500" width="7" height="5" fill="#c4c4c4" stroke="none"/></g><g stroke="#7a7a7a" stroke-width="1.100"><path d="M102.500 5.500h11v10h-11zM104.500 5.500v10M111.500 5.500v10"/><path d="M131 15.500c0-9 12-9 12 0M134 10l3-3 3 3"/><circle cx="168" cy="12" r="6.500"/><path d="M168 10.500v5M168 7.500v1.200"/></g></svg>
<div class="t" style="left:1182.00px;transform-origin:0 50%;top:76.46px;font-size:11.5px;color:#d2d2d2;transform:scaleX(0.8431)">Navigator</div>
<div class="a" style="left:1135px;top:91px;width:231px;height:99px;background:#2d2d2d;overflow:hidden">
<div class="a" style="left:51px;top:1px;width:129px;height:99px;background:#fff"></div>
<svg style="left:51px;top:0;overflow:hidden" viewBox="324 -6 822 637" width="129" height="100" fill="none" stroke-width="3.200"><g stroke="#8fd6ee" opacity=".8"><path d="M450 96L368 139L362 181L378 248L408 287L506 313L548 276L559 230L545 153L510 107L474 96C468 86 456 86 450 96"/><path d="M386 230L410 265L408 308L478 332L545 322L562 301L558 235"/><path d="M324 341L390 309L559 289L667 268"/><path d="M394 272L392 308L414 350L429 423L436 532L432 700"/><path d="M611 96L594 153L594 235L617 297L651 330L720 327L774 271L803 167L770 125L707 96C690 70 630 70 611 96"/><path d="M654 100C680 78 750 75 775 96L806 135L798 195"/><path d="M697 272L701 423L712 700"/><path d="M705 316L588 317L562 365L543 496L553 598L570 700"/><path d="M788 316L809 404L826 500L807 530L763 505L709 385L728 377L743 397"/><path d="M935 96L886 118L856 202L856 255L875 292L910 311L991 286L1030 265L1053 181L1046 139L1005 105L974 96C962 84 946 84 935 96"/><path d="M856 255L854 294L896 332L956 327L1005 304L1007 265"/><path d="M1020 272L1023 306L1008 350L984 496L984 700"/><path d="M856 288L1023 306L1051 320L1081 423L1100 520"/><path d="M854 294L831 386L805 532L790 700"/></g><path d="M190 331H1146" stroke="#9be698" stroke-width="5.500"/><path d="M1081 97H1146" stroke="#9be698" stroke-width="5"/><g stroke="#b568e2" stroke-width="3.600" opacity=".9"><path d="M394 272L485 253L562 265L570 295L552 343L494 423L498 372L531 343L562 305"/><path d="M394 272L374 315L380 350L429 399L457 423L451 372L404 315L394 272"/><path d="M697 272L670 246L673 258L640 246L649 255L605 246L618 255L572 253L588 264L570 281L584 279L572 334L591 323L585 361L611 341L610 384L641 351L645 411L660 357"/><path d="M697 272L725 246L721 258L754 246L747 255L789 247L776 254L822 253L807 265L826 282L811 279L821 308L807 294L822 335L803 324L808 362L786 342L784 385L754 352L749 412L734 358"/></g></svg>
<div class="a" style="left:38px;top:15.500px;width:132px;height:90px;border:2px solid #c21010;border-top:2.500px solid #d00e0e;border-bottom:none"></div>
</div>
<!-- nav controls -->
<svg style="left:1135px;top:191px" width="231" height="46" fill="none" stroke="#c8c8c8" stroke-width="1.100">
<g stroke="none"><rect x="5" y="7" width="75" height="12" fill="#3a3a3a"/><path d="M5 19L80 7v12z" fill="#2c2c2c"/><rect x="5" y="26" width="75" height="13" fill="#3a3a3a"/><path d="M5 26l37 13h-37zM80 26l-37 13h37z" fill="#2c2c2c"/></g>
<rect x="5.500" y="7.500" width="74" height="11" stroke="#5e5e5e" stroke-width="1"/><rect x="5.500" y="26.500" width="74" height="12" stroke="#5e5e5e" stroke-width="1"/>
<rect x="35" y="4.500" width="3" height="17" fill="#8c8c8c" stroke="#6a6a6a" stroke-width=".6"/><rect x="42" y="23.500" width="3" height="17" fill="#8c8c8c" stroke="#6a6a6a" stroke-width=".6"/>
<circle cx="136.500" cy="13" r="6.800"/><path d="M133 13h7"/>
<circle cx="156.500" cy="13" r="6.800"/><path d="M153 13h7M156.500 9.500v7"/>
<circle cx="176.500" cy="13" r="6.800"/><rect x="173.500" y="10" width="6" height="6" rx="1" fill="#c8c8c8" stroke="none"/>
<path d="M188.500 5v17M188.500 25v16" stroke="#6e6e6e"/>
<path d="M194.500 7.500h7v7h-7zM199.500 12.500h7v7h-7z"/><path d="M197 10l5.500 5.500M202.500 12.500v3h-3" stroke-width="1"/>
<path d="M214.500 7.500h11v11h-11z"/><path d="M217 10l6 6M217 13v-3h3M223 13v3h-3" stroke-width="1"/>
<path d="M131.500 30a5 5 0 1 1 2 6.500M131 27v3.500h3.500" stroke-width="1.200"/>
<path d="M161.500 30a5 5 0 1 0-2 6.500M162 27v3.500h-3.500" stroke-width="1.200"/>
<circle cx="176.500" cy="33.500" r="6"/><path d="M176.500 33.500v-5M176.500 33.500l-2.500 2M174.500 25.500l2 1.200" stroke-width="1.200"/><circle cx="176.500" cy="33.500" r="1.300" fill="#c8c8c8" stroke="none"/>
<path d="M194.500 28.500l5 5-5 5z"/><path d="M206.500 28.500l-5 5 5 5z" fill="#c8c8c8"/><path d="M200.500 26v15" stroke-width=".8"/>
<path d="M215 26.500h10l-5 5z" fill="#c8c8c8"/><path d="M215 40.500h10l-5-5z"/><path d="M213 33.500h14" stroke-width=".8"/>
</svg>
<div class="t" style="right:105.00px;transform-origin:100% 50%;top:197.91px;font-size:12.5px;color:#dedede;transform:scaleX(0.8633)">25.0</div>
<div class="t" style="right:105.00px;transform-origin:100% 50%;top:217.91px;font-size:12.5px;color:#dedede;transform:scaleX(0.8633)">0.0</div>
<!-- LAYER PROPERTY -->
<div class="a" style="left:1135px;top:238px;width:231px;height:160px;background:#4a4a4a"></div>
<div class="a" style="left:1135px;top:259px;width:217px;height:139px;background:#4d4d4d"></div>
<div class="a" style="left:1135px;top:238px;width:231px;height:16px;background:#3a3a3a"></div>
<div class="a" style="left:1155px;top:240px;width:92px;height:19px;background:#535353"></div>
<div class="a" style="left:1249px;top:240px;width:28px;height:14px;background:#474747"></div>
<div class="a" style="left:1279px;top:240px;width:28px;height:14px;background:#474747"></div>
<div class="a" style="left:1135px;top:254px;width:231px;height:5px;background:#535353"></div>
<svg style="left:1135px;top:238px" width="231" height="22" stroke="#9a9a9a" stroke-width="1" fill="none"><path d="M6 5.500h7M6 8.500h7M6 11.500h7"/><g stroke="#c4c4c4" stroke-width="1.100" stroke-linejoin="round"><path d="M27 7.500l7-3.500 7 3.500-7 3.500zM27 10.500l7 3.500 4-2M27 13.500l7 3.500 2-1M27 16.500l7 3.500 1-.5"/><circle cx="38.500" cy="16" r="1.200"/><circle cx="42" cy="16" r="1.200"/><path d="M37.500 19l2 2M39.500 19l-2 2M41 19.500h2.500v2h-2.500z" stroke-width=".8"/></g><g stroke="#7a7a7a" stroke-width="1.100"><path d="M121 10l7-3 7 3-7 3zM122 13c2 3 10 3 12 0"/><path d="M124 14c0-3 2-6 5-6s5 3 5 6M150 9a6 6 0 1 1-2 8" /></g><path d="M153 8.500a5.500 5.500 0 1 0 6 9z" fill="#7a7a7a" stroke="none"/></svg>
<div class="t" style="left:1182.00px;transform-origin:0 50%;top:243.76px;font-size:11.5px;color:#d2d2d2;transform:scaleX(0.8087)">Layer Property</div>
<svg style="left:1135px;top:259px" width="217" height="60" stroke="#777" stroke-width="1" fill="none"><path d="M5 8.500h4M39 8.500h174M5 45.500h4M89 45.500h124"/></svg>
<div class="t" style="left:1145.00px;transform-origin:0 50%;top:261.91px;font-size:12.5px;color:#dedede;transform:scaleX(0.8509)">Effect</div>
<div class="a" style="left:1269px;top:275px;width:80px;height:20px;background:#555;border:1px solid #6a6a6a;border-radius:3px"></div>
<svg style="left:1269px;top:275px" width="80" height="20" stroke="#c8c8c8" stroke-width="1.100" fill="none"><circle cx="11" cy="10" r="6.500"/><g fill="#c8c8c8" stroke="none"><rect x="27" y="4" width="1.600" height="1.600"/><rect x="31" y="4" width="1.600" height="1.600"/><rect x="35" y="4" width="1.600" height="1.600"/><rect x="29" y="6.700" width="1.600" height="1.600"/><rect x="33" y="6.700" width="1.600" height="1.600"/><rect x="27" y="9.400" width="1.600" height="1.600"/><rect x="31" y="9.400" width="1.600" height="1.600"/><rect x="35" y="9.400" width="1.600" height="1.600"/><rect x="29" y="12.100" width="1.600" height="1.600"/><rect x="33" y="12.100" width="1.600" height="1.600"/><rect x="27" y="14.800" width="1.600" height="1.600"/><rect x="31" y="14.800" width="1.600" height="1.600"/><rect x="35" y="14.800" width="1.600" height="1.600"/></g><rect x="52.500" y="7.500" width="9" height="9" rx="1.500"/><rect x="48.500" y="3.500" width="9" height="9" rx="1.500" fill="#8f8f8f"/><path d="M68.500 8.500l3.500 3.500 3.500-3.500"/></svg>
<div class="t" style="left:1145.00px;transform-origin:0 50%;top:298.91px;font-size:12.5px;color:#dedede;transform:scaleX(0.8334)">Expression color</div>
<div class="a" style="left:1152px;top:315px;width:145px;height:20px;background:#5c5c5c;border:1px solid #707070;border-radius:2px"></div>
<svg style="left:1152px;top:315px" width="145" height="20" fill="none"><circle cx="51.500" cy="7.500" r="4.200" fill="#e25252"/><circle cx="48.500" cy="12.500" r="4.200" fill="#4fc24f"/><circle cx="55" cy="12.500" r="4.200" fill="#4a8fe0"/><circle cx="51.700" cy="10.800" r="1.800" fill="#eee"/><path d="M132.500 8.500l3.500 3.500 3.500-3.500" stroke="#d8d8d8" stroke-width="1.100"/></svg>
<div class="t" style="left:1216.00px;transform-origin:0 50%;top:318.91px;font-size:12.5px;color:#e4e4e4;transform:scaleX(0.8370)">Color</div>

<!-- LAYER PANEL -->
<div class="a" style="left:1135px;top:400px;width:231px;height:327px;background:#4d4d4d"></div>
<div class="a" style="left:1135px;top:398px;width:231px;height:17px;background:#3a3a3a"></div>
<div class="a" style="left:1155px;top:401px;width:53px;height:20px;background:#535353"></div>
<div class="a" style="left:1210px;top:401px;width:61px;height:14px;background:#474747"></div>
<div class="a" style="left:1273px;top:401px;width:82px;height:14px;background:#474747"></div>
<div class="a" style="left:1135px;top:415px;width:231px;height:6px;background:#535353"></div>
<svg style="left:1135px;top:400px" width="231" height="22" stroke="#9a9a9a" stroke-width="1" fill="none"><path d="M6 6.500h7M6 9.500h7M6 12.500h7"/><g stroke="#c4c4c4" stroke-width="1.100" stroke-linejoin="round"><path d="M26 9l7-3.500 7 3.500-7 3.500zM26 12.500l7 3.500 7-3.500M26 16l7 3.500 7-3.500"/></g><g stroke="#777" stroke-width="1.100"><path d="M84 7.500h9a3.500 3.500 0 0 1 0 7h-8M87 4.500l-3.500 3 3.500 3"/><path d="M145.500 9.500h14v7M145.500 9.500l14-3M148 9l1.500 2M152 8l1.500 2M156 7.200l1.500 2"/></g></svg>
<div class="t" style="left:1182.00px;transform-origin:0 50%;top:405.76px;font-size:11.5px;color:#d2d2d2;transform:scaleX(0.7647)">Layer</div>
<div class="a" style="left:1236px;top:407px;width:34px;height:8px;overflow:hidden"><div class="t" style="left:2.00px;transform-origin:0 50%;top:-2.24px;font-size:11.5px;color:#7a7a7a;transform:scaleX(0.8105)">History</div></div>
<div class="a" style="left:1299px;top:407px;width:56px;height:8px;overflow:hidden"><div class="t" style="left:2.00px;transform-origin:0 50%;top:-2.24px;font-size:11.5px;color:#7a7a7a;transform:scaleX(0.8594)">Auto Action</div></div>
<!-- row 1 -->
<div class="a" style="left:1136px;top:421px;width:39px;height:20px;background:#5a5a5a;border:1px solid #727272;border-radius:3px"></div>
<svg style="left:1136px;top:421px" width="39" height="20" stroke="#c8c8c8" stroke-width="1.100" fill="none"><rect x="5.500" y="4.500" width="12" height="11" rx="2.500" stroke="#a8a8a8" stroke-width="1.400"/><path d="M26.500 8.500l3.500 3.500 3.500-3.500"/></svg>
<div class="a" style="left:1178px;top:421px;width:72px;height:20px;background:#5a5a5a;border:1px solid #727272;border-radius:3px"></div>
<div class="t" style="left:1191.00px;transform-origin:0 50%;top:424.91px;font-size:12.5px;color:#e2e2e2;transform:scaleX(0.8192)">Normal</div>
<svg style="left:1236px;top:421px" width="14" height="20" stroke="#d0d0d0" stroke-width="1.100" fill="none"><path d="M2.500 8.500l3.500 3.500 3.500-3.500"/></svg>
<div class="a" style="left:1256px;top:426px;width:70px;height:9px;background-color:#f6f6f6;background-image:linear-gradient(45deg,#c4c4c4 25%,transparent 25%,transparent 75%,#c4c4c4 75%),linear-gradient(45deg,#c4c4c4 25%,transparent 25%,transparent 75%,#c4c4c4 75%);background-size:9px 9px;background-position:0 0,4.500px 4.500px"></div>
<div class="a" style="left:1256px;top:426px;width:70px;height:9px;background:linear-gradient(to right,rgba(255,255,255,0),rgba(110,110,110,.6))"></div>
<div class="a" style="left:1325.500px;top:421px;width:3px;height:19px;background:#8c8c8c"></div>
<div class="t" style="right:16.00px;transform-origin:100% 50%;top:424.91px;font-size:12.5px;color:#e2e2e2;transform:scaleX(0.8152)">100</div>
<svg style="left:1352px;top:423px" width="12" height="16" stroke="#d0d0d0" stroke-width="1.100" fill="none"><path d="M2 6l3.500-3.500 3.500 3.500M2 10.500l3.500 3.500 3.500-3.500"/></svg>
<!-- row 2 -->
<div class="a" style="left:1257px;top:442px;width:34px;height:21px;background:#535353"></div>
<div class="a" style="left:1294px;top:442px;width:34px;height:21px;background:#535353"></div>
<div class="a" style="left:1330px;top:442px;width:34px;height:21px;background:#585858;border:1px solid #707070;border-radius:3px"></div>
<svg style="left:1135px;top:442px" width="231" height="21" stroke="#c4c4c4" stroke-width="1.100" fill="none" stroke-linejoin="round">
<rect x="26.500" y="8.500" width="8" height="8" fill="#a0a0a0" stroke="#a0a0a0"/><rect x="28.500" y="5.500" width="8" height="8" stroke-dasharray="2 1.300"/>
<path d="M48 18l1.500-9h2l1.500 9z" fill="#c4c4c4" stroke="none"/><path d="M47.500 7h6M45 4.500l3 2M56 4.500l-3 2M44.500 9.500l3-1M56.500 9.500l-3-1" stroke-width="1"/>
<path d="M66.500 4.500h5l1 6-3.500 3-3.500-3zM74 12l3 4M77 13v3.500h-3.500M70 14v3" stroke-width="1"/>
<rect x="85" y="10" width="9" height="7.500" rx="1" fill="#c4c4c4" stroke="none"/><path d="M87 10v-2.500c0-3.300 5-3.300 5 0v2.500" stroke-width="1.300"/>
<rect x="104" y="12" width="6" height="5.500" fill="#c4c4c4" stroke="none"/><path d="M105.300 12v-2c0-2.300 3.400-2.300 3.400 0v2" stroke-width="1"/><g fill="#c4c4c4" stroke="none"><rect x="109" y="5" width="3" height="3"/><rect x="115" y="5" width="3" height="3"/><rect x="112" y="8" width="3" height="3"/><rect x="115" y="11" width="3" height="3"/><rect x="112" y="14" width="3" height="3"/></g>
<g stroke="#737373"><rect x="126.500" y="6.500" width="10" height="10" rx="1.500" fill="#737373"/><circle cx="131.500" cy="11.500" r="2.800" fill="#535353" stroke="none"/><path d="M136 14l4 4M140 14l-4 4" stroke-width="1.300"/><path d="M145.500 9.500l3 3 3-3" stroke="#b8b8b8"/>
<path d="M164 16.500v-9.500h9.500z" fill="#737373"/><path d="M174 14l4 4M178 14l-4 4" stroke-width="1.300"/><path d="M182.500 9.500l3 3 3-3" stroke="#b8b8b8"/></g>
<rect x="204" y="8" width="9" height="9" fill="#fff" stroke="none"/><rect x="199" y="4" width="9" height="9" fill="#3a8ff2" stroke="none"/><path d="M218.500 9.500l3 3 3-3" stroke="#d8d8d8"/>
</svg>
<!-- row 3 -->
<svg style="left:1134px;top:465px" width="231" height="22" stroke="#c4c4c4" stroke-width="1.100" fill="none" stroke-linejoin="round">
<rect x="4.500" y="4.500" width="13" height="12" rx="1.500"/><path d="M4.500 10.500h13M7 7.500h1.500M7 13.500h1.500"/>
<path d="M75.500 3.500h11v8M75.500 3.500v11l3 2h3"/><circle cx="87.5" cy="15.500" r="3.300" fill="#4d4d4d"/><path d="M85.5 15.500h4M87.5 13.500v4" stroke-width="1"/>
<path d="M95.500 3.500h11v8M95.500 3.500v11l3 2h3"/><circle cx="101" cy="9.500" r="3"/><path d="M101 9.500l2 2" stroke-width="1"/><circle cx="107.5" cy="15.500" r="3.300" fill="#4d4d4d"/><path d="M105.5 15.500h4M107.5 13.500v4" stroke-width="1"/>
<path d="M114.500 15.500v-12h5l1.500 2h7v6" fill="#c4c4c4"/><circle cx="127.5" cy="15.500" r="3.300" fill="#4d4d4d"/><path d="M125.5 15.500h4M127.5 13.500v4" stroke-width="1"/>
<path d="M139.500 3.500h8v8h-8zM135.500 8.500h8v8h-8z"/><rect x="142" y="5.500" width="3" height="3" fill="#c4c4c4" stroke="none"/><path d="M141.500 11v2.500h-4M139 12l-1.500 1.500 1.500 1.500" stroke-width="1"/>
<path d="M159.500 3.500h8v8h-8zM155.500 8.500h8v8h-8z"/><path d="M162 10l-4 4M158 11v3h3" stroke-width="1"/>
<rect x="173.500" y="3.500" width="13" height="13" rx="2" fill="#c4c4c4"/><circle cx="180" cy="10" r="3.600" fill="#4d4d4d" stroke="none"/>
<g stroke="#707070"><rect x="193.500" y="5.500" width="12" height="10" rx="1.500" fill="#707070"/><circle cx="202" cy="11" r="2.800" fill="#4d4d4d" stroke="none"/><path d="M195 10.500h4M197 8.500v4" stroke="#4d4d4d" stroke-width="1"/></g>
<path d="M214.500 5.500h11M217.500 5.500v-2h5v2M215.500 5.500l.8 11h7.400l.8-11M218.500 8v6M221.500 8v6"/>
</svg>
<!-- list -->
<div class="a" style="left:1135px;top:488px;width:217px;height:239px;background:#3e3e3e"></div><div class="a" style="left:1352px;top:488px;width:14px;height:239px;background:#484848"></div>
<div class="a" style="left:1174px;top:521px;width:178px;height:33px;background:#65708a"></div>
<div class="a" style="left:1155px;top:488px;width:1px;height:166px;background:#2c2c2c"></div>
<div class="a" style="left:1173px;top:488px;width:1px;height:166px;background:#2c2c2c"></div>
<div class="a" style="left:1135px;top:521px;width:217px;height:1px;background:#2a2a2a"></div>
<svg style="left:1137px;top:497px" width="16" height="14" fill="none" stroke="#d0d0d0" stroke-width="1.200"><path d="M1.500 7c3-5.500 10-5.500 13 0-3 4.500-10 4.500-13 0z"/><circle cx="8" cy="6.800" r="2.600" fill="#d0d0d0" stroke="none"/><circle cx="7.200" cy="6" r=".9" fill="#3e3e3e" stroke="none"/></svg>
<div class="a" style="left:1160px;top:499px;width:10px;height:11px;border:1px solid #5a5a5a;border-radius:2px"></div>
<div class="a" style="left:1180px;top:492px;width:34px;height:26px;background-color:#fff;background-image:linear-gradient(45deg,#d2d2d2 25%,transparent 25%,transparent 75%,#d2d2d2 75%),linear-gradient(45deg,#d2d2d2 25%,transparent 25%,transparent 75%,#d2d2d2 75%);background-size:8px 8px;background-position:0 0,4px 4px;border:1px solid #1e1e1e"></div>
<div class="a" style="left:1135px;top:554px;width:217px;height:1px;background:#2a2a2a"></div>
<svg style="left:1137px;top:530px" width="16" height="14" fill="none" stroke="#d0d0d0" stroke-width="1.200"><path d="M1.500 7c3-5.500 10-5.500 13 0-3 4.500-10 4.500-13 0z"/><circle cx="8" cy="6.800" r="2.600" fill="#d0d0d0" stroke="none"/><circle cx="7.200" cy="6" r=".9" fill="#3e3e3e" stroke="none"/></svg>
<div class="a" style="left:1180px;top:525px;width:34px;height:26px;background-color:#fff;background-image:linear-gradient(45deg,#d2d2d2 25%,transparent 25%,transparent 75%,#d2d2d2 75%),linear-gradient(45deg,#d2d2d2 25%,transparent 25%,transparent 75%,#d2d2d2 75%);background-size:8px 8px;background-position:0 0,4px 4px;border:1px solid #1e1e1e"></div>
<div class="a" style="left:1135px;top:587px;width:217px;height:1px;background:#2a2a2a"></div>
<svg style="left:1137px;top:563px" width="16" height="14" fill="none" stroke="#d0d0d0" stroke-width="1.200"><path d="M1.500 7c3-5.500 10-5.500 13 0-3 4.500-10 4.500-13 0z"/><circle cx="8" cy="6.800" r="2.600" fill="#d0d0d0" stroke="none"/><circle cx="7.200" cy="6" r=".9" fill="#3e3e3e" stroke="none"/></svg>
<div class="a" style="left:1160px;top:565px;width:10px;height:11px;border:1px solid #5a5a5a;border-radius:2px"></div>
<div class="a" style="left:1180px;top:558px;width:34px;height:26px;background-color:#fff;background-image:linear-gradient(45deg,#d2d2d2 25%,transparent 25%,transparent 75%,#d2d2d2 75%),linear-gradient(45deg,#d2d2d2 25%,transparent 25%,transparent 75%,#d2d2d2 75%);background-size:8px 8px;background-position:0 0,4px 4px;border:1px solid #1e1e1e"></div>
<div class="a" style="left:1135px;top:620px;width:217px;height:1px;background:#2a2a2a"></div>
<svg style="left:1137px;top:596px" width="16" height="14" fill="none" stroke="#d0d0d0" stroke-width="1.200"><path d="M1.500 7c3-5.500 10-5.500 13 0-3 4.500-10 4.500-13 0z"/><circle cx="8" cy="6.800" r="2.600" fill="#d0d0d0" stroke="none"/><circle cx="7.200" cy="6" r=".9" fill="#3e3e3e" stroke="none"/></svg>
<div class="a" style="left:1160px;top:598px;width:10px;height:11px;border:1px solid #5a5a5a;border-radius:2px"></div>
<div class="a" style="left:1180px;top:591px;width:34px;height:26px;background-color:#fff;background-image:linear-gradient(45deg,#d2d2d2 25%,transparent 25%,transparent 75%,#d2d2d2 75%),linear-gradient(45deg,#d2d2d2 25%,transparent 25%,transparent 75%,#d2d2d2 75%);background-size:8px 8px;background-position:0 0,4px 4px;border:1px solid #1e1e1e"></div>
<div class="a" style="left:1135px;top:653px;width:217px;height:1px;background:#2a2a2a"></div>
<svg style="left:1137px;top:629px" width="16" height="14" fill="none" stroke="#d0d0d0" stroke-width="1.200"><path d="M1.500 7c3-5.500 10-5.500 13 0-3 4.500-10 4.500-13 0z"/><circle cx="8" cy="6.800" r="2.600" fill="#d0d0d0" stroke="none"/><circle cx="7.200" cy="6" r=".9" fill="#3e3e3e" stroke="none"/></svg>
<div class="a" style="left:1160px;top:631px;width:10px;height:11px;border:1px solid #5a5a5a;border-radius:2px"></div>
<svg style="left:1155px;top:527px" width="16" height="20" fill="none" stroke="#d8d8d8" stroke-width="1.100"><path d="M12.500 3.500l2 2-8 8.500-3 1 1-3z" fill="#d8d8d8" stroke="none"/><path d="M2 17.500h12"/></svg>
<div class="a" style="left:1178px;top:523px;width:38px;height:30px;border:1px solid #e8e8e8"></div>
<div class="a" style="left:1181px;top:505px;width:32px;height:1px;background:#a5e2a0"></div><div class="a" style="left:1181px;top:496px;width:32px;height:1px;background:#c4ecc0"></div>
<div class="a" style="left:1180px;top:624px;width:34px;height:26px;background:#fff;border:1px solid #1e1e1e"></div>
<div class="a" style="left:1226px;top:624px;width:18px;height:18px;background:#fff;border:1px solid #222;border-radius:2px"></div>
<svg style="left:1226px;top:624px" width="18" height="18" fill="none" stroke="#222" stroke-width="1.200" stroke-linejoin="round"><path d="M5.500 3.500h8v8l-3 3h-5z"/><path d="M13.500 11.500h-3v3"/></svg>
<div class="t" style="left:1222.00px;transform-origin:0 50%;top:492.71px;font-size:12.5px;color:#dedede;transform:scaleX(0.7890)">51 % Normal</div>
<div class="t" style="left:1222.00px;transform-origin:0 50%;top:505.71px;font-size:12.5px;color:#dedede;transform:scaleX(0.8382)">Height Line</div>
<div class="t" style="left:1222.00px;transform-origin:0 50%;top:525.21px;font-size:12.5px;color:#eceef4;transform:scaleX(0.7955)">100 % Normal</div>
<div class="t" style="left:1222.00px;transform-origin:0 50%;top:538.71px;font-size:12.5px;color:#eceef4;transform:scaleX(0.8130)">Clothes Copy</div>
<div class="t" style="left:1222.00px;transform-origin:0 50%;top:558.21px;font-size:12.5px;color:#dedede;transform:scaleX(0.7955)">100 % Normal</div>
<div class="t" style="left:1222.00px;transform-origin:0 50%;top:571.71px;font-size:12.5px;color:#dedede;transform:scaleX(0.8022)">Clothes</div>
<div class="t" style="left:1222.00px;transform-origin:0 50%;top:591.21px;font-size:12.5px;color:#dedede;transform:scaleX(0.7955)">100 % Normal</div>
<div class="t" style="left:1222.00px;transform-origin:0 50%;top:604.71px;font-size:12.5px;color:#dedede;transform:scaleX(0.7918)">Figures</div>
<div class="t" style="left:1247.00px;transform-origin:0 50%;top:637.41px;font-size:12.5px;color:#dedede;transform:scaleX(0.8395)">Paper</div>

<div class="a" style="left:1364px;top:69px;width:2px;height:657px;background:#303030"></div>
<!-- CANVAS SCROLLBARS + STATUS BAR -->
<div class="a" style="left:1081px;top:96px;width:13px;height:632px;background:#434343"></div>
<div class="a" style="left:1082px;top:96px;width:12px;height:12px;background:#545454;border-radius:2px"></div>
<div class="a" style="left:1082px;top:702px;width:12px;height:11px;background:#545454;border-radius:2px"></div>
<div class="a" style="left:1083px;top:324px;width:10px;height:232px;background:#555;border-radius:5px"></div>
<svg style="left:1082px;top:96px" width="12" height="617" stroke="#c8c8c8" stroke-width="1.100" fill="none"><path d="M3 7.500l3-3 3 3M3 609.500l3 3 3-3"/></svg>
<div class="a" style="left:240px;top:713px;width:855px;height:15px;background:#2e2e2e"></div>
<div class="a" style="left:241px;top:714px;width:99px;height:12px;background:#333;border:1px solid #6c6c6c"></div>
<svg style="left:241px;top:714px" width="99" height="12"><path d="M1 11L40 3v8z" fill="#434343"/><path d="M40 0h1.500v12h-1.500z" fill="#777"/><path d="M42 1h56v10h-56z" fill="#3d3d3d"/><path d="M42 11L98 6v5z" fill="#454545"/></svg>
<div class="t" style="right:1027.50px;transform-origin:100% 50%;top:715.21px;font-size:12.5px;color:#dcdcdc;transform:scaleX(0.8633)">25.0</div>
<svg style="left:342px;top:713px" width="60" height="15" stroke="#9a9a9a" stroke-width="1.100" fill="none"><path d="M6 7.500h7M26 7.500h7M29.500 4v7"/><rect x="45.500" y="4.500" width="5" height="5" fill="#b8b8b8" stroke="none"/></svg>
<div class="a" style="left:402px;top:714px;width:98px;height:12px;background:#333;border:1px solid #6c6c6c"></div>
<svg style="left:402px;top:714px" width="98" height="12"><path d="M1 1h46v10h-46z" fill="#3d3d3d"/><path d="M49 11L62 3l10-2 12 3 13 7z" fill="#434343"/><path d="M47.500 0h1.500v12h-1.500z" fill="#777"/></svg>
<div class="t" style="left:407.30px;transform-origin:0 50%;top:715.21px;font-size:12.5px;color:#dcdcdc;transform:scaleX(0.8460)">0.0</div>
<div class="a" style="left:562px;top:715px;width:11px;height:11px;background:#484848;border-radius:2px"></div><svg style="left:503px;top:713px" width="72" height="15" stroke="#9a9a9a" stroke-width="1" fill="none"><path d="M5 7a3.500 3.500 0 1 1 1.500 4M4.500 4.500v3h3"/><path d="M30 7a3.500 3.500 0 1 0-1.500 4M30.500 4.500v3h-3"/><circle cx="47.500" cy="8" r="4"/><path d="M47.500 8v-3M46 2.500l1.500 1"/><path d="M66 4.500l-3 3 3 3" stroke="#c0c0c0"/></svg>


<div class="a" style="left:706px;top:715px;width:194px;height:10px;background:#555;border-radius:5px"></div>
<div class="a" style="left:1069px;top:714px;width:12px;height:12px;background:#4a4a4a;border-radius:2px"></div>
<svg style="left:1069px;top:714px" width="12" height="12" stroke="#c8c8c8" stroke-width="1.100" fill="none"><path d="M4.500 3l3 3-3 3"/></svg>

<!-- COMMAND BAR ICONS -->
<svg style="left:240px;top:49px" width="520" height="25" fill="none" stroke="#c6c6c6" stroke-width="1.200" stroke-linejoin="round" stroke-linecap="round">
<rect x="4.500" y="3.500" width="17" height="17" rx="1.500" stroke-width="1.100"/><g transform="translate(13.800 11.900) scale(.66 .78) translate(-858 -19.700)"><path d="M856.400 11.900C851 13.500 847.500 16 847.900 19.500C848 23 851 27 855.800 27.400C861 27.600 868 25 868 20.400C868 16.500 864 15.500 859.700 16.200C856 17 853.500 19 853.800 21.400C854.200 23.500 859 23 862.400 20.100" stroke-width="2.100"/></g>
<path d="M29.500 3v19M123.500 3v19M179 3v19M283.500 3v19M363.500 3v19" stroke="#6a6a6a" stroke-width="1"/>
<!-- new -->
<path d="M39.500 3.500h12v10M39.500 3.500v13l3 3h4"/><circle cx="52" cy="18.800" r="4" fill="#868686" stroke="#c6c6c6"/><path d="M49.500 18.800h5M52 16.300v5" stroke="#e0e0e0" stroke-width="1.100"/>
<!-- open -->
<path d="M61.500 19.500v-13h4l1.500 2h5.500v2.500" /><path d="M61.500 19.500l3-8h14.500l-3 8z" fill="#c6c6c6"/><path d="M72 6.500c1.500-2 4-2.500 5.500-1.500M75.500 3l2.500 2-2.500 2" stroke-width="1.100"/>
<!-- save -->
<path d="M85.500 16.500l4-8h8l4 8v4h-16zM93.500 3v8.500M90.500 8.500l3 3 3-3M85.500 16.500h16" /><rect x="85.500" y="16.500" width="16" height="4" fill="#c6c6c6"/>
<path d="M109.500 10.500l3.500 3.500 3.500-3.500"/>
<!-- undo -->
<path d="M133 8.500h8.500c6.500 0 6.500 10 0 10h-9" stroke-width="1.400"/><path d="M136.500 4l-5 4.500 5 4.500z" fill="#c6c6c6" stroke="none"/>
<g stroke="#757575"><path d="M169 8.500h-8.500c-6.500 0-6.500 10 0 10h9" stroke-width="1.400"/><path d="M165.500 4l5 4.500-5 4.500z" fill="#757575" stroke="none"/></g>
<!-- spinner -->
<path d="M195.0 7.0L195.0 2.8M197.5 7.7L199.6 4.0M199.3 9.5L203.0 7.4M200.0 12.0L204.2 12.0M199.3 14.5L203.0 16.6M197.5 16.3L199.6 20.0M195.0 17.0L195.0 21.2M192.5 16.3L190.4 20.0M190.7 14.5L187.0 16.6M190.0 12.0L185.8 12.0M190.7 9.5L187.0 7.4M192.5 7.7L190.4 4.0" stroke-width="1.600"/>
<!-- clear outside -->
<g stroke="#757575" stroke-width="1.100"><rect x="211.500" y="4.500" width="11" height="11" stroke-dasharray="2 1.500" fill="#585858"/><path d="M225 10v2M227 13.500l-1.500 1M223.500 17.500l1 1.500M220 18.500v2M228 17h-2"/></g>
<!-- fill -->
<path d="M239.200 8.900h9.400l3.900 3.900-7.900 7.300-7.900-7.900z" fill="#c6c6c6" stroke="#c6c6c6" stroke-width="1"/><path d="M239.200 8.900l4-5.300 5.400 5.300" stroke-width="1.200"/><path d="M237.500 10c-3 .700-4.500 2.700-4.200 5 .200 1.500 1.200 2.300 2.500 2 .300-1.800.300-3.500 1.500-5z" fill="#c6c6c6" stroke="none"/>
<!-- transform -->
<rect x="260.500" y="6.500" width="13" height="13" stroke-width="1.400"/><g fill="#c6c6c6" stroke="none"><circle cx="260.500" cy="6.500" r="1.600"/><circle cx="273.500" cy="6.500" r="1.600"/><circle cx="260.500" cy="19.500" r="1.600"/><circle cx="273.500" cy="19.500" r="1.600"/><circle cx="267" cy="6.500" r="1.400"/><circle cx="267" cy="19.500" r="1.400"/><circle cx="260.500" cy="13" r="1.400"/><circle cx="273.500" cy="13" r="1.400"/><circle cx="267" cy="2.500" r="1.400"/></g><path d="M267 2.500v4" stroke-width="1"/>
<!-- dim selection icons -->
<g stroke="#6f6f6f" stroke-width="1.100"><rect x="291.500" y="4.500" width="15" height="15" stroke-dasharray="2.200 1.600"/><path d="M291.500 4.500l16 16"/>
<rect x="315.500" y="4.500" width="15" height="15" stroke-dasharray="2.200 1.600"/><path d="M330.500 6v13.500h-13.500z" fill="#6f6f6f" stroke="none"/>
<rect x="339.500" y="3.500" width="16" height="17" rx="2"/><rect x="342.500" y="6.500" width="10" height="11" stroke-dasharray="2.200 1.600" stroke-width="1"/></g>
</svg>
<div class="a" style="left:607px;top:49px;width:48px;height:24px;background:#65708a;border-radius:3px"></div>
<div class="a" style="left:630.500px;top:49px;width:1px;height:24px;background:#5a6378"></div>
<svg style="left:600px;top:49px" width="160" height="25" fill="none" stroke="#d6d6d6" stroke-width="1.100" stroke-linejoin="round" stroke-linecap="round">
<path d="M11.500 5.400v14.400h8" stroke="#e4e6ee" stroke-width="1.200"/><path d="M11.500 5.400l13.700 14.100" stroke="#a9b0c2" stroke-width=".9"/><path d="M20.800 10.200l6.500-6.500" stroke="#e4e6ee" stroke-width="2.300"/><path d="M21 10l-1.800 1.700" stroke="#e4e6ee" stroke-width="1"/>
<path d="M34 12.500h17.500c0 11-17.500 11-17.500 0z" stroke="#b9bfd0" stroke-width="1"/><path d="M36 17c3 5 10.500 5 13.500 0" stroke="#e4e6ee" stroke-width="1.100"/><path d="M44.800 10.200l6.500-6.500" stroke="#e4e6ee" stroke-width="2.300"/><path d="M45 10l-1.800 1.700" stroke="#e4e6ee" stroke-width="1"/>
<path d="M58.600 12.500h17.500M70.300 10.700v10" stroke="#8c8c8c" stroke-width=".9"/><path d="M68 12.500h-6.300v5.800h13.800" stroke-width="1.200"/><path d="M68.800 10.200l6.500-6.500" stroke-width="2.300"/><path d="M69 10l-1.800 1.700" stroke-width="1"/>
<path d="M83.500 3v19M115.500 3v19" stroke="#6a6a6a" stroke-width="1"/>
<rect x="93.500" y="2.500" width="11" height="17" rx="1" stroke-width="1.200"/><rect x="93.500" y="17" width="11" height="3.500" fill="#c6c6c6" stroke="none"/><g fill="#d6d6d6" stroke="none"><rect x="95.500" y="4.500" width="2" height="2"/><rect x="98.500" y="4.500" width="2" height="2"/><rect x="101.500" y="4.500" width="1.500" height="2"/><rect x="95.500" y="7.500" width="2" height="2"/><rect x="98.500" y="7.500" width="2" height="2"/><rect x="95.500" y="10.500" width="2" height="2"/><rect x="98.500" y="10.500" width="2" height="2"/><rect x="95.500" y="13.500" width="2" height="1.500"/></g>
<path d="M131.500 4.500c-9 0-10 12-3 14l-3.500 2.500 6-1c9 1 11-15.500.5-15.500z" stroke-width="1.200"/><path d="M129 9c.5-2.500 5-2.500 5 0 0 2-2.500 2-2.500 4M131.500 15.500v.5" stroke-width="1.500"/><path d="M136.500 6.500l4-4M137.500 2.500h3v3" stroke-width="1"/>
</svg>
<svg style="left:1080px;top:78px" width="12" height="12" stroke="#d0d0d0" stroke-width="1.200" fill="none"><path d="M2.500 4.500l3.500 3.500 3.500-3.500"/></svg>
<!-- TASKBAR -->
<div class="a" style="left:0;top:726px;width:1366px;height:2px;background:#161616"></div>
<div class="a" id="taskbar" style="left:0;top:728px;width:1366px;height:40px;background:#dcdde9"></div>
<div class="a" style="left:49px;top:728px;width:286px;height:40px;background:#fcfcfe"></div>
<div class="a" style="left:881px;top:728px;width:43px;height:40px;background:#eeeff6"></div>
<svg style="left:0;top:728px" width="1366" height="40" fill="none">
<!-- windows logo -->
<path d="M16 13.200l7-1v7.300h-7zM24 12l8-1.200v8.700h-8zM16 20.500h7v7.300l-7-1zM24 20.500h8v8.700l-8-1.200z" fill="#111"/>
<!-- search icon -->
<circle cx="71.500" cy="17.500" r="5" stroke="#222" stroke-width="1.300"/><path d="M68 21.500l-6.500 7" stroke="#222" stroke-width="1.400"/>
<!-- bing -->
<circle cx="309.500" cy="19.500" r="12.800" stroke="#2f7fd6" stroke-width="1.500" fill="#fff"/><path d="M299.500 27.500l-3 5.500 7-2.500" stroke="#2f7fd6" stroke-width="1.400" fill="#fff" stroke-linejoin="round"/>
<path d="M305.500 11.500l3 1v10.500l4.500-2.500-2.200-1-1.300-3.200 6.500 2.300v3.400l-7.500 4.300-3-1.700z" fill="#1f73d8"/>
<!-- task view -->
<g stroke="#111" stroke-width="1.300"><rect x="353.500" y="13.500" width="9" height="12"/><path d="M351.500 11.500h5M351.500 27.500h5M360 11.500h5M360 27.500h5" stroke-width="1.200"/><path d="M367.500 13v3M367.500 18v7" stroke-width="2"/></g>
<!-- opera -->
<ellipse cx="408.500" cy="20" rx="11" ry="11.500" stroke="#e8475f" stroke-width="2"/><ellipse cx="408.500" cy="20" rx="5.500" ry="9.500" stroke="#e8475f" stroke-width="1.700"/>
<!-- edge -->
<defs><linearGradient id="edg" x1="0" y1="0" x2="1" y2="1"><stop offset="0" stop-color="#2fc6a8"/><stop offset=".5" stop-color="#1b9de2"/><stop offset="1" stop-color="#0c59a4"/></linearGradient><linearGradient id="edg2" x1="0" y1="0" x2="1" y2="0"><stop offset="0" stop-color="#35c1f1"/><stop offset="1" stop-color="#7bdc5a"/></linearGradient></defs>
<path d="M442 20c0-7 5-12 11.500-12 7 0 11.500 5 11.500 10 0 4-3 6-6.500 6-3 0-4.500-1.500-4-3 .5-1 1-1.500 1-3 0-2-2-3.500-4.500-3.500-4 0-6.500 3.500-6.500 7.500 0 5 4 9 9 9 3 0 5-.8 7-2-2 3.500-5.500 5-9 5-6 0-9.500-5.500-9.500-14z" fill="url(#edg)"/><path d="M442.500 18c1-6 5.500-10 11-10 7 0 11.500 5 11.500 10 0 1-.2 2-.5 2.800-1-5-5-8.300-10.500-8.300-5 0-9.500 2-11.500 5.500z" fill="url(#edg2)"/>
<circle cx="449" cy="26" r="6.500" fill="#8a8f98"/><circle cx="449" cy="23.500" r="2.300" fill="#e8e8ec"/><path d="M444.500 30c.5-3 2-4 4.500-4s4 1 4.500 4c-2.500 2.500-6.500 2.500-9 0z" fill="#e8e8ec"/>
<!-- mail -->
<path d="M487 17l11.500-8 11.500 8v14h-23z" fill="#1566c0"/><path d="M487 17l11.500 8.500 11.500-8.500v14h-23z" fill="#2f9bf0"/><path d="M488.500 17h20l-10 7.500z" fill="#fff"/><path d="M487 31l9-8.500M510 31l-9-8.500" stroke="#1a78d4" stroke-width="1"/>
<!-- explorer -->
<path d="M532 10.500h8l2 2.500h13v5h-23z" fill="#e9a820"/><path d="M532 15h24v15h-24z" fill="#f9d667"/><path d="M537 23h13v7h-3.500v-3.500h-6v3.500h-3.500z" fill="#3d8fd8"/><path d="M532 28.500h24v1.500h-24z" fill="#e4b840"/>
<!-- store -->
<path d="M577 14h23v14c0 1.500-1 2.500-2.500 2.500h-18c-1.500 0-2.500-1-2.500-2.500z" fill="#12467f"/><path d="M583 14v-3c0-1.500 1-2.500 2.500-2.500h6c1.500 0 2.500 1 2.500 2.500v3" stroke="#2d8de0" stroke-width="1.800"/><rect x="583.500" y="17" width="4.500" height="4.500" fill="#f35325"/><rect x="589" y="17" width="4.500" height="4.500" fill="#81bc06"/><rect x="583.500" y="22.500" width="4.500" height="4.500" fill="#05a6f0"/><rect x="589" y="22.500" width="4.500" height="4.500" fill="#ffba08"/>
<!-- mouse -->
<path d="M627 16c0-8 13-8 13 0v8c0 9-13 9-13 0z" fill="#8a8a8e"/><path d="M633.500 10v9M627 19h13" stroke="#dcdde9" stroke-width="1.300"/><rect x="632" y="12.500" width="3" height="5" rx="1.500" fill="#dcdde9"/>
<!-- green home -->
<rect x="668" y="9.500" width="21" height="21" rx="3.500" fill="#1fa85a"/><path d="M678.500 13l-7 6v8.500h3.500v-4c0-4.500 7-4.500 7 0v4h3.500v-8.500z" fill="#fff"/><path d="M677 27.500v-3h3v3z" fill="#fff"/>
<!-- blue pen -->
<defs><linearGradient id="bp" x1="0" y1="0" x2="1" y2="1"><stop offset="0" stop-color="#3fa0ff"/><stop offset="1" stop-color="#1560e0"/></linearGradient></defs>
<rect x="712" y="8" width="24" height="24" rx="4.500" fill="url(#bp)"/><path d="M722 32l14-16v11.500c0 2.500-2 4.500-4.500 4.500z" fill="#0e4cc4" opacity=".55"/><path d="M728.500 12.500l3 2-8 11.500-3.500 2 .5-4z" fill="#fff"/><path d="M726.800 14.800l3 2" stroke="#2a78ee" stroke-width=".9"/>
<!-- minecraft -->
<path d="M768.500 8.500l11 5.500-11 5.500-11-5.500z" fill="#6cc349"/><path d="M757.500 14l11 5.500v13l-11-5.500z" fill="#7a5236"/><path d="M779.500 14l-11 5.500v13l11-5.500z" fill="#5c3b26"/><path d="M757.500 14l11 5.500v3l-11-5.500z" fill="#57a83a"/><path d="M779.500 14l-11 5.500v3l11-5.500z" fill="#48932f"/>
<!-- gear -->
<g transform="translate(813.500 20)"><circle r="5.800" stroke="#2a2a2a" stroke-width="2.800"/><g stroke="#2a2a2a" stroke-width="3.200"><path d="M0-10v3M0 7v3M-10 0h3M7 0h3M-7.100-7.100l2.100 2.100M5 5l2.100 2.100M7.100-7.100l-2.100 2.100M-5 5l-2.100 2.100"/></g></g>
<!-- csp gray -->
<defs><linearGradient id="cspg" x1="0" y1="0" x2="0" y2="1"><stop offset="0" stop-color="#f4f4f5"/><stop offset=".6" stop-color="#e2e2e4"/><stop offset="1" stop-color="#f0f0f2"/></linearGradient></defs>
<rect x="847" y="8.600" width="22" height="22.400" rx="4.500" fill="url(#cspg)"/><path d="M856.400 11.900C851 13.500 847.500 16 847.900 19.500C848 23 851 27 855.800 27.400C861 27.600 868 25 868 20.400C868 16.500 864 15.500 859.700 16.200C856 17 853.500 19 853.800 21.400C854.200 23.500 859 23 862.400 20.100" stroke="#808083" stroke-width="2.700" stroke-linecap="round"/>
<!-- csp black -->
<rect x="890.200" y="8.300" width="23.200" height="23" rx="4.500" fill="url(#cspg)"/><path d="M902.200 28.300L900.200 25C905.800 24.400 911.100 21.800 910.800 17.500C910.400 13.200 905.200 11.200 900.900 11.750C895.300 12.500 892 15.800 893 18.100C894 20.800 899.200 17.800 903.900 18.100" stroke="#2a2a2a" stroke-width="2.900" stroke-linecap="round" stroke-linejoin="round"/>
<!-- underlines -->
<g fill="#0a78d4"><rect x="391" y="38" width="36" height="2"/><rect x="616" y="38" width="36" height="2"/><rect x="706" y="38" width="36" height="2"/><rect x="796" y="38" width="36" height="2"/><rect x="841" y="38" width="36" height="2"/><rect x="881" y="38" width="43" height="2"/></g>
<!-- weather -->
<defs><linearGradient id="cld" x1="0" y1="0" x2="0" y2="1"><stop offset="0" stop-color="#dbe9fa"/><stop offset="1" stop-color="#8dbaec"/></linearGradient></defs><circle cx="966" cy="13.500" r="6.500" fill="#f0a52a"/><circle cx="962.300" cy="10.800" r="6" fill="#dcdde9"/><path d="M963.500 31c-6.500 0-6.800-8.500-.8-9.300 1-6.500 10.500-7.300 12.300-1.200 6.500-1 9 8.500 2.500 10.500z" fill="url(#cld)"/>
<!-- tray -->
<g stroke="#1a1a1a" stroke-width="1.300" stroke-linecap="round" stroke-linejoin="round"><path d="M1037 22.800l6-6 6 6" stroke-width="1.500"/>
<path d="M1062 25c0-5 4-9 9-9M1065.500 25.500c0-3.500 2.500-6 6-6M1061 21c1-4.500 5-8 10-8.500" stroke-width="1.100"/><circle cx="1070" cy="25" r="1.600" fill="#1a1a1a" stroke="none"/>
<rect x="1086.500" y="15.500" width="7" height="9" rx="1.500"/><path d="M1093.500 18.500l3.500-2v7l-3.500-2M1086 12.500c2-1.500 6-1.500 8 0M1086 27.500c2 1.500 6 1.500 8 0" stroke-width="1"/>
<path d="M1109 24.500c-3.500 0-3.500-5 0-5 .5-4.500 7.500-5 8.500-1 3.500-.5 4.500 6 .5 6z" fill="#8e8e92" stroke="#1a1a1a" stroke-width="1.100"/>
<rect x="1130.500" y="15.500" width="13" height="8" rx="1"/><path d="M1145 18v3" stroke-width="1.500"/><rect x="1132.500" y="17.500" width="5" height="4" fill="#1a1a1a" stroke="none"/>
<path d="M1155.500 17.500h2.500l4-3.500v12l-4-3.500h-2.500z"/><path d="M1165 17c1.200 1.500 1.200 4.500 0 6" stroke-width="1.100"/><path d="M1167.500 15c2.200 2.500 2.200 7.500 0 10M1170 13c3 3.500 3 10.500 0 14" stroke="#9a9aa0" stroke-width="1"/>
<path d="M1186 27c-2.500-1-1.500-4.500 1-5.500l8.500-9c1.500-1.500 3.500.5 2.300 2l-7.500 9.500c-1 1.500-1.300 3.500-3 4.500M1190 18.500c3-1 7-.5 7.500 2 .3 1.500-2 2.500-3.500 2.500" stroke-width="1.400"/>
</g>
<!-- notification -->
<path d="M1326.500 12.500h17v12h-11.500l-3 3v-3h-2.500z" fill="#111"/><path d="M1329.500 16h11M1329.500 18.800h11M1329.500 21.500h8" stroke="#dcdde9" stroke-width="1"/><circle cx="1340.500" cy="27" r="5.800" fill="#dcdde9" stroke="#777" stroke-width=".9"/>
<path d="M1361.500 0v40" stroke="#9a9aa4" stroke-width="1"/>
</svg>
<div class="t" style="left:88.30px;transform-origin:0 50%;top:740.87px;font-size:15.5px;color:#262626;transform:scaleX(0.9306)">Type here to search</div>
<div class="t" style="left:990.00px;transform-origin:0 50%;top:740.84px;font-size:14.0px;color:#1a1a1a;transform:scaleX(0.9150)">0°C</div>
<div class="t" style="left:1213.00px;transform-origin:0 50%;top:741.91px;font-size:12.5px;color:#1a1a1a;transform:scaleX(0.8491)">ENG</div>
<div class="t" style="left:1254.00px;transform-origin:0 50%;top:732.91px;font-size:12.5px;color:#1a1a1a;transform:scaleX(0.8785)">10:03 PM</div>
<div class="t" style="left:1248.00px;transform-origin:0 50%;top:750.41px;font-size:12.5px;color:#1a1a1a;transform:scaleX(0.9228)">2023-03-02</div>
<div class="t" style="left:1338.00px;transform-origin:0 50%;top:750.61px;font-size:10.5px;color:#111;transform:scaleX(0.9418)">2</div>
</body></html>
